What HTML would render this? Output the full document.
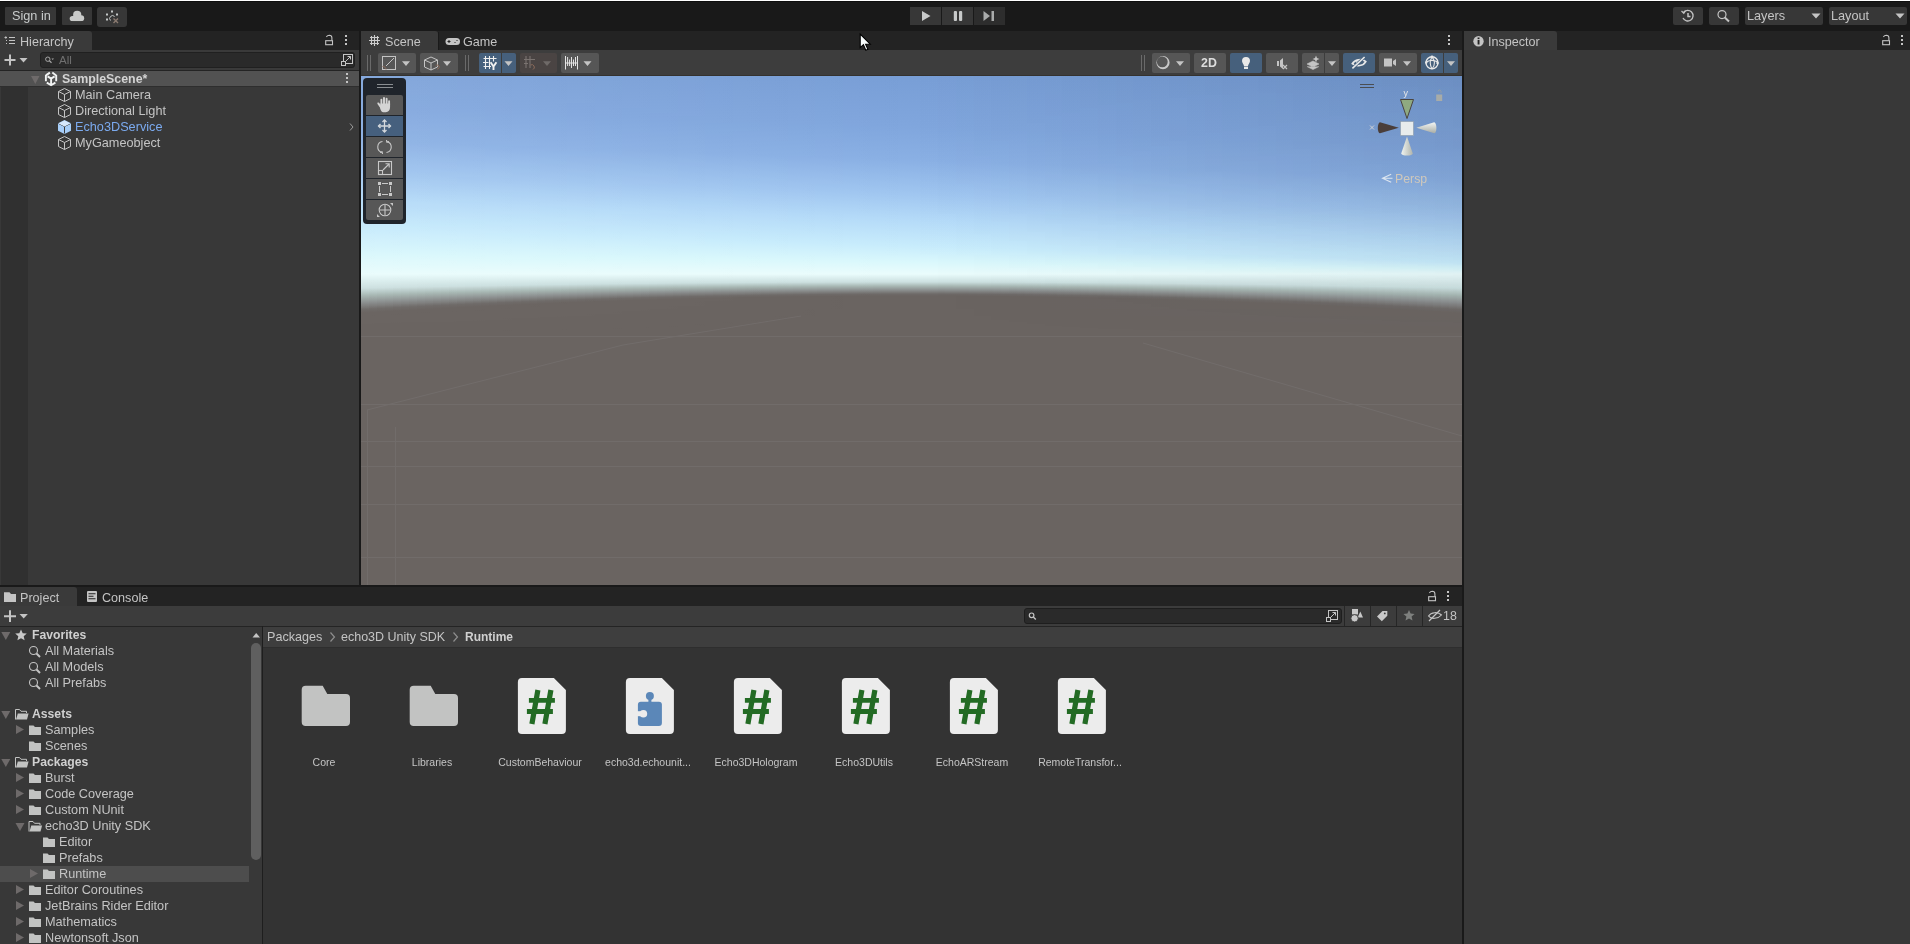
<!DOCTYPE html>
<html><head><meta charset="utf-8">
<style>
*{box-sizing:border-box;margin:0;padding:0}
html,body{width:1910px;height:944px;overflow:hidden;background:#191919;font-family:"Liberation Sans",sans-serif;color:#c4c4c4;font-size:12.5px}
.a{position:absolute}
.t{position:absolute;white-space:nowrap;line-height:16px;height:16px;will-change:transform}
.btn{position:absolute;background:#373737;border-radius:2px}
.sb{position:absolute;background:#565656;border-radius:2px}
.blue{background:#46607c}
svg{position:absolute;overflow:visible}
.ic{fill:none;stroke:#c4c4c4;stroke-width:1}
</style></head><body>
<!-- TOP TOOLBAR -->
<div class="a" style="left:0;top:0;width:1910px;height:1px;background:#ffffff"></div>
<div class="a" style="left:0;top:1px;width:1910px;height:1px;background:#0e0e0e"></div>

<div class="btn" style="left:5px;top:7px;width:51px;height:18px;border-radius:1px"></div>
<div class="t" style="left:12px;top:8px;color:#c9cccc;font-size:12.7px">Sign in</div>
<div class="btn" style="left:62px;top:7px;width:30px;height:18px;border-radius:1px"></div>
<svg style="left:0;top:0" width="1" height="1"><g fill="#c9cac9"><circle cx="72.3" cy="18.5" r="2.6"/><circle cx="77.2" cy="14.9" r="4.1"/><circle cx="81.3" cy="18.2" r="2.85"/><rect x="72.3" y="16" width="9" height="5.05"/></g></svg>
<div class="btn" style="left:97px;top:7px;width:30px;height:20px;border-radius:3px"></div>
<svg style="left:0;top:0" width="1" height="1">
<g fill="#c4c8c8"><rect x="111" y="10.5" width="2" height="2"/><rect x="106" y="13.5" width="2" height="2"/><rect x="116" y="13.5" width="2" height="2"/><rect x="106" y="18.5" width="2" height="2"/></g>
<path d="M110.5 20.5 A2.8 2.8 0 1 1 114.6 16.5" class="ic" style="stroke:#c4c8c8"/>
<path d="M113.5 18.5 L118 23 M118 18.5 L113.5 23" stroke="#8a7a70" stroke-width="1.4"/>
</svg>

<div class="btn" style="left:910px;top:7px;width:31px;height:18px;border-radius:0"></div>
<div class="btn" style="left:942px;top:7px;width:31px;height:18px;border-radius:0"></div>
<div class="btn" style="left:974px;top:7px;width:31px;height:18px;border-radius:0;background:#2d2d2d"></div>
<svg style="left:0;top:0" width="1" height="1">
<path d="M922 11 L930.5 16 L922 21 Z" fill="#c8caca"/>
<rect x="953.8" y="11" width="3.2" height="10" rx="1" fill="#c8caca"/><rect x="959" y="11" width="3.2" height="10" rx="1" fill="#c8caca"/>
<path d="M983.5 11 L990 16 L983.5 21 Z" fill="#a9abab"/><rect x="991.5" y="11" width="2.5" height="10" fill="#a9abab"/>
</svg>

<div class="btn" style="left:1673px;top:7px;width:30px;height:18px"></div>
<div class="btn" style="left:1709px;top:7px;width:30px;height:18px"></div>
<svg style="left:0;top:0" width="1" height="1">
<path d="M1683.5 12.5 A5.3 5.3 0 1 1 1683 18" class="ic" style="stroke-width:1.3"/>
<path d="M1681.5 11 L1683.8 13.2 L1685.5 10.6" class="ic" style="stroke-width:1.2"/>
<path d="M1688 13 L1688 16.5 L1690.5 16.5" class="ic" style="stroke-width:1.5"/>
<circle cx="1722" cy="14.6" r="4" class="ic" style="stroke-width:1.2"/>
<path d="M1724.8 17.6 L1729 21.5" class="ic" style="stroke-width:2"/>
</svg>
<div class="btn" style="left:1745px;top:7px;width:78px;height:18px"></div>
<div class="t" style="left:1747px;top:8px;color:#c4c4c4;font-size:12.7px">Layers</div>
<div class="btn" style="left:1829px;top:7px;width:78px;height:18px"></div>
<div class="t" style="left:1831px;top:8px;color:#c4c4c4;font-size:12.7px">Layout</div>
<svg style="left:0;top:0" width="1" height="1"><path d="M1811.5 13.5 L1820.5 13.5 L1816 18.5Z M1895.5 13.5 L1904.5 13.5 L1900 18.5Z" fill="#c4c4c4"/></svg>

<!-- HIERARCHY -->
<div class="a" style="left:0;top:31px;width:359px;height:554px;background:#383838"></div>
<div class="a" style="left:0;top:31px;width:359px;height:19px;background:#232323"></div>
<div class="a" style="left:0;top:31px;width:92px;height:19px;background:#3a3a3a;border-radius:0 3px 0 0"></div>
<svg style="left:0;top:0" width="1" height="1"><g stroke="#c4c4c4" stroke-width="1" fill="none">
<path d="M9 37.5 H15 M9 40.5 H15 M9 43.5 H15 M4.5 37.5 H7 M5.8 36.3 V38.7 M6 40.5 H7 M6 43.5 H7"/></g></svg>
<div class="t" style="left:20px;top:34px;font-size:12.6px">Hierarchy</div>
<svg style="left:0;top:0" width="1" height="1">
<g transform="translate(-1557 0)"><path d="M1883.4 36.8 Q1884.6 35.2 1886.2 35.2 Q1888.9 35.3 1888.9 37.8 V40.6" class="ic" style="stroke-width:1.1"/><rect x="1882.7" y="40.7" width="6.8" height="4" class="ic" style="stroke-width:1.1"/></g>
<g fill="#c4c4c4"><rect x="345" y="35" width="2" height="2"/><rect x="345" y="39" width="2" height="2"/><rect x="345" y="43" width="2" height="2"/></g>
</svg>
<div class="a" style="left:0;top:50px;width:359px;height:20px;background:#3a3a3a"></div>
<svg style="left:0;top:0" width="1" height="1"><path d="M10 54.5 V65.5 M4.5 60 H15.5" stroke="#c4c4c4" stroke-width="2"/><path d="M19.5 58 L27.5 58 L23.5 62.5Z" fill="#c4c4c4"/></svg>
<div class="a" style="left:40px;top:52px;width:315px;height:16px;background:#2a2a2a;border:1px solid #202020;border-radius:3px"></div>
<svg style="left:0;top:0" width="1" height="1">
<circle cx="47.8" cy="59.2" r="2.2" class="ic" style="stroke:#a8a8a8"/><path d="M49.4 60.8 L51.5 62.8" stroke="#a8a8a8" stroke-width="1.2"/><path d="M51.5 58.5 L54 58.5 L52.7 60Z" fill="#a8a8a8"/>
</svg>
<div class="t" style="left:59px;top:52px;color:#707070;font-size:11.5px">All</div>
<svg style="left:0;top:0" width="1" height="1">
<rect x="343.5" y="54.5" width="9" height="9" class="ic"/><rect x="341.5" y="61.5" width="4" height="4" class="ic" style="fill:#2a2a2a"/><path d="M345 62 L350.5 56.5 M347.5 56.5 H350.5 V59.5" class="ic"/>
</svg>
<div class="a" style="left:1px;top:87px;width:27px;height:498px;background:#303030"></div>
<div class="a" style="left:0;top:70px;width:359px;height:1px;background:#242424"></div>
<div class="a" style="left:0;top:71px;width:359px;height:15px;background:#525252"></div>
<div class="a" style="left:0;top:86px;width:359px;height:1px;background:#2e2e2e"></div>
<svg style="left:0;top:0" width="1" height="1">
<path d="M31 76 L39.5 76 L35.25 84Z" fill="#6e6a6a"/>
<g stroke="#f2f4f4" stroke-width="1.9" fill="none"><path d="M45.9 75 V81.2 M56.2 75 V81.2 M45.9 75.4 L49.9 72.6 M52.3 72.6 L56.2 75.4 M47.6 76.4 L51.1 78.6 L54.6 76.4 M51.1 78.6 V84.6 M46.8 82.6 L51.1 85.2 L55.4 82.6"/></g>
<g fill="#c4c4c4"><rect x="346" y="73" width="2" height="2"/><rect x="346" y="77" width="2" height="2"/><rect x="346" y="81" width="2" height="2"/></g>
</svg>
<div class="t" style="left:62px;top:71px;font-weight:bold;color:#d4d4d4;font-size:12.4px">SampleScene*</div>
<svg style="left:0;top:0" width="1" height="1"><g fill="none" stroke="#c4c4c4" stroke-width="1">
<g transform="translate(0 0)"><path d="M64.5 88.5 L70.5 91.5 L70.5 98.5 L64.5 101.5 L58.5 98.5 L58.5 91.5Z M58.5 91.5 L64.5 94.5 L70.5 91.5 M64.5 94.5 V101.5"/></g>
<g transform="translate(0 16)"><path d="M64.5 88.5 L70.5 91.5 L70.5 98.5 L64.5 101.5 L58.5 98.5 L58.5 91.5Z M58.5 91.5 L64.5 94.5 L70.5 91.5 M64.5 94.5 V101.5"/></g>
<g transform="translate(0 48)"><path d="M64.5 88.5 L70.5 91.5 L70.5 98.5 L64.5 101.5 L58.5 98.5 L58.5 91.5Z M58.5 91.5 L64.5 94.5 L70.5 91.5 M64.5 94.5 V101.5"/></g>
</g>
<g transform="translate(0 32)"><path d="M64.5 88 L71 91.3 L71 98.7 L64.5 102 L58 98.7 L58 91.3Z" fill="#a6cdf8"/><path d="M58.5 91.5 L64.5 94.5 L70.5 91.5 M64.5 94.5 V101.5" stroke="#3a3a3a" stroke-width="1" fill="none"/><path d="M64.5 88.5 L70.5 91.5 L64.5 94.5 L58.5 91.5Z" fill="#d6e8fc"/></g>
<path d="M350 123.5 L353 127 L350 130.5" class="ic" style="stroke:#9a9a9a"/>
</svg>
<div class="t" style="left:75px;top:87px;font-size:12.7px">Main Camera</div>
<div class="t" style="left:75px;top:103px;font-size:12.7px">Directional Light</div>
<div class="t" style="left:75px;top:119px;color:#7baaef;font-size:12.7px">Echo3DService</div>
<div class="t" style="left:75px;top:135px;font-size:12.7px">MyGameobject</div>

<!-- separators -->
<div class="a" style="left:359px;top:31px;width:2px;height:556px;background:#191919"></div>
<div class="a" style="left:1462px;top:31px;width:2px;height:913px;background:#191919"></div>
<div class="a" style="left:0;top:585px;width:1462px;height:2px;background:#191919"></div>


<!-- SCENE -->
<div class="a" style="left:361px;top:31px;width:1101px;height:19px;background:#232323"></div>
<div class="a" style="left:361px;top:31px;width:77px;height:19px;background:#3a3a3a;border-radius:0 3px 0 0"></div>
<div class="a" style="left:438px;top:32px;width:1px;height:18px;background:#1a1a1a"></div>
<svg style="left:0;top:0" width="1" height="1"><path d="M371.5 36 V45 M374.5 35 V46 M377.5 36 V45 M370 37.5 H379 M369 40.5 H380 M370 43.5 H379" stroke="#cccccc" stroke-width="1.1"/>
<path d="M449 38 H456.5 A3.5 3.5 0 0 1 456.5 45 H449 A3.5 3.5 0 0 1 449 38Z" fill="#c4c4c4"/><path d="M447.5 41.5 H450.5 M449 40 V43 M454.5 43 L455.5 42 M456.5 41 L457.5 40" stroke="#232323" stroke-width="1"/>
<g fill="#c4c4c4"><rect x="1448" y="35" width="2" height="2"/><rect x="1448" y="39" width="2" height="2"/><rect x="1448" y="43" width="2" height="2"/></g>
</svg>
<div class="t" style="left:385px;top:34px;font-size:12.6px">Scene</div>
<div class="t" style="left:463px;top:34px;font-size:12.6px">Game</div>
<div class="a" style="left:361px;top:50px;width:1101px;height:25px;background:#3d3d3d"></div>
<div class="a" style="left:361px;top:75px;width:1101px;height:1px;background:#34322f"></div>
<!-- scene toolbar buttons -->
<svg style="left:0;top:0" width="1" height="1"><g stroke="#6a6a6a" stroke-width="1"><path d="M367.5 55 V71 M370.5 55 V71 M465.5 55 V71 M468.5 55 V71 M1141.5 55 V71 M1144.5 55 V71"/></g></svg>
<div class="sb" style="left:378px;top:53px;width:38px;height:20px"></div>
<div class="sb" style="left:420px;top:53px;width:38px;height:20px"></div>
<div class="sb blue" style="left:479px;top:53px;width:22px;height:20px;border-radius:2px 0 0 2px"></div>
<div class="sb blue" style="left:502px;top:53px;width:14px;height:20px;border-radius:0 2px 2px 0"></div>
<div class="sb" style="left:520px;top:53px;width:37px;height:20px;background:#4a4443"></div>
<div class="sb" style="left:561px;top:53px;width:38px;height:20px"></div>
<svg style="left:0;top:0" width="1" height="1">
<g fill="#c4c4c4"><path d="M402 61.3 L410 61.3 L406 66Z M443 61.3 L451 61.3 L447 66Z M504.5 61.3 L512.5 61.3 L508.5 66Z M583.5 61.3 L591.5 61.3 L587.5 66Z"/></g>
<path d="M543 61.3 L551 61.3 L547 66Z" fill="#6f6a68"/>
<rect x="382.5" y="56.5" width="13" height="13" class="ic"/><path d="M386 66 L394 58" class="ic"/><path d="M382.5 66.5 A3 3 0 0 1 386 69.5" stroke="#8a6a5a" fill="none"/>
<path d="M431 57 L437.5 60 L437.5 67 L431 70 L424.5 67 L424.5 60Z M424.5 60 L431 63 L437.5 60 M431 63 V70" class="ic"/><path d="M435.5 66 A2 2 0 1 1 437 69" stroke="#8a6a5a" fill="none"/>
<path d="M485.5 56 V69 M489.5 56 V69 M493.5 56 V61.5 M483.5 58.5 H496.5 M483 62.5 H488.5 M483.5 66.5 H491" stroke="#f0f0f0" stroke-width="1.1"/><path d="M490.6 62.3 L493.5 66.5 L496.4 62.3 M493.5 66.5 V70" stroke="#f0f0f0" stroke-width="1.9" fill="none"/>
<path d="M526 56 V68 M530 56 V68 M524 59.5 H535 M524 63.5 H528" stroke="#7a7370" stroke-width="1.1"/><path d="M530.5 65 A2.5 2.5 0 1 1 533 69.5" stroke="#8a6a5a" fill="none"/>
<path d="M565.5 56 V69.5 M577.5 56 V69.5 M567.6 57 V66 M569.6 59.5 V66 M571.5 57 V68 M573.5 59.5 V66 M575.5 57 V66 M565.5 63 H577.5" stroke="#e4e4e4" stroke-width="1"/>
</svg>
<div class="sb" style="left:1152px;top:53px;width:38px;height:20px"></div>
<div class="sb" style="left:1194px;top:53px;width:32px;height:20px"></div>
<div class="sb blue" style="left:1230px;top:53px;width:32px;height:20px"></div>
<div class="sb" style="left:1266px;top:53px;width:32px;height:20px"></div>
<div class="sb" style="left:1302px;top:53px;width:22px;height:20px;border-radius:2px 0 0 2px"></div>
<div class="sb" style="left:1325px;top:53px;width:14px;height:20px;border-radius:0 2px 2px 0"></div>
<div class="sb blue" style="left:1343px;top:53px;width:32px;height:20px"></div>
<div class="sb" style="left:1379px;top:53px;width:38px;height:20px"></div>
<div class="sb blue" style="left:1421px;top:53px;width:22px;height:20px;border-radius:2px 0 0 2px"></div>
<div class="sb blue" style="left:1444px;top:53px;width:14px;height:20px;border-radius:0 2px 2px 0"></div>
<div class="t" style="left:1201px;top:55px;font-weight:bold;color:#dcdcdc;font-size:12.4px">2D</div>
<svg style="left:0;top:0" width="1" height="1">
<g fill="#c4c4c4"><path d="M1176 61.3 L1184 61.3 L1180 66Z M1328 61.3 L1336 61.3 L1332 66Z M1403 61.3 L1411 61.3 L1407 66Z M1447 61.3 L1455 61.3 L1451 66Z"/></g>
<path d="M1156.4 62.6 A6.6 6.6 0 1 0 1169.6 62.6 A6.6 6.6 0 1 0 1156.4 62.6Z M1156.9 61.8 A5.4 5.4 0 1 0 1167.7 61.8 A5.4 5.4 0 1 0 1156.9 61.8Z" fill="#c8c8c8" fill-rule="evenodd"/>
<path d="M1246 57 A4 4 0 0 1 1250 61 C1250 63 1248.3 64 1248 66 H1244 C1243.7 64 1242 63 1242 61 A4 4 0 0 1 1246 57Z" fill="#e8e8e8"/><rect x="1244" y="66.6" width="4" height="2.4" fill="#e8e8e8"/>
<path d="M1277 61 H1279 V66 H1277Z M1280 60.5 L1283 58 V69 L1280 66.5Z" fill="#c4c4c4"/><path d="M1283 65 L1287 69 M1287 65 L1283 69" stroke="#c4c4c4" stroke-width="1.2"/>
<path d="M1307 64 L1313 61 L1319 64 L1313 67Z M1307 66.5 L1313 69.5 L1319 66.5" fill="#c4c4c4" stroke="#c4c4c4" stroke-width="0.6"/><path d="M1316 55.5 L1317 58 L1319.5 59 L1317 60 L1316 62.5 L1315 60 L1312.5 59 L1315 58Z" fill="#c4c4c4"/>
<path d="M1352.3 63.6 C1354.5 59.8 1362 58.2 1365.8 61.6 C1363.5 65.8 1356.5 67.2 1352.3 63.6Z" class="ic" style="stroke:#e8e8e8;stroke-width:1.7"/><path d="M1357.5 64.5 A2.4 2.4 0 0 1 1361 60.8" class="ic" style="stroke:#e8e8e8;stroke-width:1.3"/><path d="M1352.4 68.4 L1364.6 57" stroke="#46607c" stroke-width="3"/><path d="M1352.4 68.4 L1364.6 57" stroke="#e8e8e8" stroke-width="1.6"/>
<rect x="1384" y="58.5" width="8" height="8" fill="#c4c4c4"/><path d="M1393 61 L1396 59 V66 L1393 64Z" fill="#c4c4c4"/>
<circle cx="1432" cy="62.8" r="6" class="ic" style="stroke:#e8e8e8;stroke-width:1.4"/><path d="M1426.5 62 C1430 60 1434 60 1437.5 62 M1432 57 C1430 60 1430 65 1432 69 M1432 57 C1435 60 1435.5 65 1432 69" class="ic" style="stroke:#e8e8e8;stroke-width:1.1"/><circle cx="1432" cy="56.8" r="1.4" fill="#e8e8e8"/><circle cx="1426.2" cy="62.5" r="1.2" fill="#e8e8e8"/><circle cx="1437.5" cy="63" r="1.2" fill="#e8e8e8"/>
</svg>

<div id="sceneview" class="a" style="left:361px;top:76px;width:1101px;height:509px;background:#6a6461;overflow:hidden">
<div class="a" style="left:0px;top:0;width:8px;height:509px;background:linear-gradient(#769cd4 -34.6px,#80a6dd 31.4px,#8ab0e4 65.4px,#a0c6f0 99.4px,#b4daf8 124.4px,#c8ecfc 153.8px,#daf8fc 179.0px,#eafcfc 198.0px,#cce0e0 212.1px,#a8b8b4 219.2px,#8c9090 226.2px,#6e6a68 233.3px,#6a6461 236.8px)"></div>
<div class="a" style="left:8px;top:0;width:8px;height:509px;background:linear-gradient(#769cd4 -34.3px,#80a6dd 31.7px,#8ab0e4 65.7px,#a0c6f0 99.7px,#b4daf8 124.7px,#c8ecfc 154.0px,#daf8fc 179.1px,#eafcfc 198.0px,#cce0e0 211.9px,#a8b8b4 218.9px,#8c9090 225.9px,#6e6a68 232.8px,#6a6461 236.3px)"></div>
<div class="a" style="left:16px;top:0;width:8px;height:509px;background:linear-gradient(#769cd4 -34.0px,#80a6dd 32.0px,#8ab0e4 66.0px,#a0c6f0 100.0px,#b4daf8 125.0px,#c8ecfc 154.2px,#daf8fc 179.2px,#eafcfc 198.0px,#cce0e0 211.8px,#a8b8b4 218.6px,#8c9090 225.5px,#6e6a68 232.4px,#6a6461 235.8px)"></div>
<div class="a" style="left:24px;top:0;width:8px;height:509px;background:linear-gradient(#769cd4 -33.7px,#80a6dd 32.3px,#8ab0e4 66.3px,#a0c6f0 100.3px,#b4daf8 125.3px,#c8ecfc 154.5px,#daf8fc 179.3px,#eafcfc 198.0px,#cce0e0 211.6px,#a8b8b4 218.4px,#8c9090 225.2px,#6e6a68 232.0px,#6a6461 235.4px)"></div>
<div class="a" style="left:32px;top:0;width:8px;height:509px;background:linear-gradient(#769cd4 -33.5px,#80a6dd 32.5px,#8ab0e4 66.5px,#a0c6f0 100.5px,#b4daf8 125.5px,#c8ecfc 154.7px,#daf8fc 179.4px,#eafcfc 198.0px,#cce0e0 211.4px,#a8b8b4 218.1px,#8c9090 224.8px,#6e6a68 231.5px,#6a6461 234.9px)"></div>
<div class="a" style="left:40px;top:0;width:8px;height:509px;background:linear-gradient(#769cd4 -33.2px,#80a6dd 32.8px,#8ab0e4 66.8px,#a0c6f0 100.8px,#b4daf8 125.8px,#c8ecfc 154.9px,#daf8fc 179.5px,#eafcfc 198.0px,#cce0e0 211.2px,#a8b8b4 217.9px,#8c9090 224.5px,#6e6a68 231.1px,#6a6461 234.4px)"></div>
<div class="a" style="left:48px;top:0;width:8px;height:509px;background:linear-gradient(#769cd4 -32.9px,#80a6dd 33.1px,#8ab0e4 67.1px,#a0c6f0 101.1px,#b4daf8 126.1px,#c8ecfc 155.2px,#daf8fc 179.7px,#eafcfc 198.0px,#cce0e0 211.1px,#a8b8b4 217.6px,#8c9090 224.2px,#6e6a68 230.7px,#6a6461 234.0px)"></div>
<div class="a" style="left:56px;top:0;width:8px;height:509px;background:linear-gradient(#769cd4 -32.7px,#80a6dd 33.3px,#8ab0e4 67.3px,#a0c6f0 101.3px,#b4daf8 126.3px,#c8ecfc 155.4px,#daf8fc 179.8px,#eafcfc 198.0px,#cce0e0 210.9px,#a8b8b4 217.4px,#8c9090 223.8px,#6e6a68 230.3px,#6a6461 233.5px)"></div>
<div class="a" style="left:64px;top:0;width:8px;height:509px;background:linear-gradient(#769cd4 -32.4px,#80a6dd 33.6px,#8ab0e4 67.6px,#a0c6f0 101.6px,#b4daf8 126.6px,#c8ecfc 155.7px,#daf8fc 179.9px,#eafcfc 198.0px,#cce0e0 210.8px,#a8b8b4 217.1px,#8c9090 223.5px,#6e6a68 229.9px,#6a6461 233.1px)"></div>
<div class="a" style="left:72px;top:0;width:8px;height:509px;background:linear-gradient(#769cd4 -32.1px,#80a6dd 33.9px,#8ab0e4 67.9px,#a0c6f0 101.9px,#b4daf8 126.9px,#c8ecfc 155.9px,#daf8fc 180.0px,#eafcfc 198.0px,#cce0e0 210.6px,#a8b8b4 216.9px,#8c9090 223.2px,#6e6a68 229.5px,#6a6461 232.7px)"></div>
<div class="a" style="left:80px;top:0;width:8px;height:509px;background:linear-gradient(#769cd4 -31.8px,#80a6dd 34.2px,#8ab0e4 68.2px,#a0c6f0 102.2px,#b4daf8 127.2px,#c8ecfc 156.1px,#daf8fc 180.1px,#eafcfc 198.0px,#cce0e0 210.5px,#a8b8b4 216.7px,#8c9090 222.9px,#6e6a68 229.1px,#6a6461 232.2px)"></div>
<div class="a" style="left:88px;top:0;width:8px;height:509px;background:linear-gradient(#769cd4 -31.6px,#80a6dd 34.4px,#8ab0e4 68.4px,#a0c6f0 102.4px,#b4daf8 127.4px,#c8ecfc 156.4px,#daf8fc 180.2px,#eafcfc 198.0px,#cce0e0 210.3px,#a8b8b4 216.4px,#8c9090 222.6px,#6e6a68 228.7px,#6a6461 231.8px)"></div>
<div class="a" style="left:96px;top:0;width:8px;height:509px;background:linear-gradient(#769cd4 -31.3px,#80a6dd 34.7px,#8ab0e4 68.7px,#a0c6f0 102.7px,#b4daf8 127.7px,#c8ecfc 156.6px,#daf8fc 180.3px,#eafcfc 198.0px,#cce0e0 210.2px,#a8b8b4 216.2px,#8c9090 222.3px,#6e6a68 228.4px,#6a6461 231.4px)"></div>
<div class="a" style="left:104px;top:0;width:8px;height:509px;background:linear-gradient(#769cd4 -31.0px,#80a6dd 35.0px,#8ab0e4 69.0px,#a0c6f0 103.0px,#b4daf8 128.0px,#c8ecfc 156.9px,#daf8fc 180.4px,#eafcfc 198.0px,#cce0e0 210.0px,#a8b8b4 216.0px,#8c9090 222.0px,#6e6a68 228.0px,#6a6461 231.0px)"></div>
<div class="a" style="left:112px;top:0;width:8px;height:509px;background:linear-gradient(#769cd4 -30.8px,#80a6dd 35.2px,#8ab0e4 69.2px,#a0c6f0 103.2px,#b4daf8 128.2px,#c8ecfc 157.1px,#daf8fc 180.5px,#eafcfc 198.0px,#cce0e0 209.9px,#a8b8b4 215.8px,#8c9090 221.7px,#6e6a68 227.7px,#6a6461 230.6px)"></div>
<div class="a" style="left:120px;top:0;width:8px;height:509px;background:linear-gradient(#769cd4 -30.5px,#80a6dd 35.5px,#8ab0e4 69.5px,#a0c6f0 103.5px,#b4daf8 128.5px,#c8ecfc 157.3px,#daf8fc 180.6px,#eafcfc 198.0px,#cce0e0 209.7px,#a8b8b4 215.6px,#8c9090 221.4px,#6e6a68 227.3px,#6a6461 230.2px)"></div>
<div class="a" style="left:128px;top:0;width:8px;height:509px;background:linear-gradient(#769cd4 -30.2px,#80a6dd 35.8px,#8ab0e4 69.8px,#a0c6f0 103.8px,#b4daf8 128.8px,#c8ecfc 157.6px,#daf8fc 180.7px,#eafcfc 198.0px,#cce0e0 209.6px,#a8b8b4 215.4px,#8c9090 221.2px,#6e6a68 227.0px,#6a6461 229.8px)"></div>
<div class="a" style="left:136px;top:0;width:8px;height:509px;background:linear-gradient(#769cd4 -29.9px,#80a6dd 36.1px,#8ab0e4 70.1px,#a0c6f0 104.1px,#b4daf8 129.1px,#c8ecfc 157.8px,#daf8fc 180.8px,#eafcfc 198.0px,#cce0e0 209.4px,#a8b8b4 215.2px,#8c9090 220.9px,#6e6a68 226.6px,#6a6461 229.5px)"></div>
<div class="a" style="left:144px;top:0;width:8px;height:509px;background:linear-gradient(#769cd4 -29.7px,#80a6dd 36.3px,#8ab0e4 70.3px,#a0c6f0 104.3px,#b4daf8 129.3px,#c8ecfc 158.0px,#daf8fc 180.9px,#eafcfc 198.0px,#cce0e0 209.3px,#a8b8b4 215.0px,#8c9090 220.6px,#6e6a68 226.3px,#6a6461 229.1px)"></div>
<div class="a" style="left:152px;top:0;width:8px;height:509px;background:linear-gradient(#769cd4 -29.4px,#80a6dd 36.6px,#8ab0e4 70.6px,#a0c6f0 104.6px,#b4daf8 129.6px,#c8ecfc 158.3px,#daf8fc 181.0px,#eafcfc 198.0px,#cce0e0 209.2px,#a8b8b4 214.8px,#8c9090 220.4px,#6e6a68 226.0px,#6a6461 228.7px)"></div>
<div class="a" style="left:160px;top:0;width:8px;height:509px;background:linear-gradient(#769cd4 -29.1px,#80a6dd 36.9px,#8ab0e4 70.9px,#a0c6f0 104.9px,#b4daf8 129.9px,#c8ecfc 158.5px,#daf8fc 181.1px,#eafcfc 198.0px,#cce0e0 209.1px,#a8b8b4 214.6px,#8c9090 220.1px,#6e6a68 225.6px,#6a6461 228.4px)"></div>
<div class="a" style="left:168px;top:0;width:8px;height:509px;background:linear-gradient(#769cd4 -28.9px,#80a6dd 37.1px,#8ab0e4 71.1px,#a0c6f0 105.1px,#b4daf8 130.1px,#c8ecfc 158.8px,#daf8fc 181.2px,#eafcfc 198.0px,#cce0e0 208.9px,#a8b8b4 214.4px,#8c9090 219.9px,#6e6a68 225.3px,#6a6461 228.1px)"></div>
<div class="a" style="left:176px;top:0;width:8px;height:509px;background:linear-gradient(#769cd4 -28.6px,#80a6dd 37.4px,#8ab0e4 71.4px,#a0c6f0 105.4px,#b4daf8 130.4px,#c8ecfc 159.0px,#daf8fc 181.3px,#eafcfc 198.0px,#cce0e0 208.8px,#a8b8b4 214.2px,#8c9090 219.6px,#6e6a68 225.0px,#6a6461 227.7px)"></div>
<div class="a" style="left:184px;top:0;width:8px;height:509px;background:linear-gradient(#769cd4 -28.3px,#80a6dd 37.7px,#8ab0e4 71.7px,#a0c6f0 105.7px,#b4daf8 130.7px,#c8ecfc 159.2px,#daf8fc 181.4px,#eafcfc 198.0px,#cce0e0 208.7px,#a8b8b4 214.0px,#8c9090 219.4px,#6e6a68 224.7px,#6a6461 227.4px)"></div>
<div class="a" style="left:192px;top:0;width:8px;height:509px;background:linear-gradient(#769cd4 -28.0px,#80a6dd 38.0px,#8ab0e4 72.0px,#a0c6f0 106.0px,#b4daf8 131.0px,#c8ecfc 159.5px,#daf8fc 181.5px,#eafcfc 198.0px,#cce0e0 208.6px,#a8b8b4 213.9px,#8c9090 219.1px,#6e6a68 224.4px,#6a6461 227.1px)"></div>
<div class="a" style="left:200px;top:0;width:8px;height:509px;background:linear-gradient(#769cd4 -27.8px,#80a6dd 38.2px,#8ab0e4 72.2px,#a0c6f0 106.2px,#b4daf8 131.2px,#c8ecfc 159.7px,#daf8fc 181.6px,#eafcfc 198.0px,#cce0e0 208.5px,#a8b8b4 213.7px,#8c9090 218.9px,#6e6a68 224.1px,#6a6461 226.7px)"></div>
<div class="a" style="left:208px;top:0;width:8px;height:509px;background:linear-gradient(#769cd4 -27.5px,#80a6dd 38.5px,#8ab0e4 72.5px,#a0c6f0 106.5px,#b4daf8 131.5px,#c8ecfc 159.9px,#daf8fc 181.7px,#eafcfc 198.0px,#cce0e0 208.3px,#a8b8b4 213.5px,#8c9090 218.7px,#6e6a68 223.9px,#6a6461 226.4px)"></div>
<div class="a" style="left:216px;top:0;width:8px;height:509px;background:linear-gradient(#769cd4 -27.2px,#80a6dd 38.8px,#8ab0e4 72.8px,#a0c6f0 106.8px,#b4daf8 131.8px,#c8ecfc 160.2px,#daf8fc 181.8px,#eafcfc 198.0px,#cce0e0 208.2px,#a8b8b4 213.3px,#8c9090 218.5px,#6e6a68 223.6px,#6a6461 226.1px)"></div>
<div class="a" style="left:224px;top:0;width:8px;height:509px;background:linear-gradient(#769cd4 -26.9px,#80a6dd 39.1px,#8ab0e4 73.1px,#a0c6f0 107.1px,#b4daf8 132.1px,#c8ecfc 160.4px,#daf8fc 181.9px,#eafcfc 198.0px,#cce0e0 208.1px,#a8b8b4 213.2px,#8c9090 218.3px,#6e6a68 223.3px,#6a6461 225.8px)"></div>
<div class="a" style="left:232px;top:0;width:8px;height:509px;background:linear-gradient(#769cd4 -26.7px,#80a6dd 39.3px,#8ab0e4 73.3px,#a0c6f0 107.3px,#b4daf8 132.3px,#c8ecfc 160.7px,#daf8fc 182.0px,#eafcfc 198.0px,#cce0e0 208.0px,#a8b8b4 213.0px,#8c9090 218.0px,#6e6a68 223.1px,#6a6461 225.6px)"></div>
<div class="a" style="left:240px;top:0;width:8px;height:509px;background:linear-gradient(#769cd4 -26.4px,#80a6dd 39.6px,#8ab0e4 73.6px,#a0c6f0 107.6px,#b4daf8 132.6px,#c8ecfc 160.9px,#daf8fc 182.1px,#eafcfc 198.0px,#cce0e0 207.9px,#a8b8b4 212.9px,#8c9090 217.8px,#6e6a68 222.8px,#6a6461 225.3px)"></div>
<div class="a" style="left:248px;top:0;width:8px;height:509px;background:linear-gradient(#769cd4 -26.1px,#80a6dd 39.9px,#8ab0e4 73.9px,#a0c6f0 107.9px,#b4daf8 132.9px,#c8ecfc 161.1px,#daf8fc 182.2px,#eafcfc 198.0px,#cce0e0 207.8px,#a8b8b4 212.7px,#8c9090 217.6px,#6e6a68 222.6px,#6a6461 225.0px)"></div>
<div class="a" style="left:256px;top:0;width:8px;height:509px;background:linear-gradient(#769cd4 -25.9px,#80a6dd 40.1px,#8ab0e4 74.1px,#a0c6f0 108.1px,#b4daf8 133.1px,#c8ecfc 161.4px,#daf8fc 182.3px,#eafcfc 198.0px,#cce0e0 207.7px,#a8b8b4 212.6px,#8c9090 217.4px,#6e6a68 222.3px,#6a6461 224.7px)"></div>
<div class="a" style="left:264px;top:0;width:8px;height:509px;background:linear-gradient(#769cd4 -25.6px,#80a6dd 40.4px,#8ab0e4 74.4px,#a0c6f0 108.4px,#b4daf8 133.4px,#c8ecfc 161.6px,#daf8fc 182.4px,#eafcfc 198.0px,#cce0e0 207.6px,#a8b8b4 212.4px,#8c9090 217.3px,#6e6a68 222.1px,#6a6461 224.5px)"></div>
<div class="a" style="left:272px;top:0;width:8px;height:509px;background:linear-gradient(#769cd4 -25.3px,#80a6dd 40.7px,#8ab0e4 74.7px,#a0c6f0 108.7px,#b4daf8 133.7px,#c8ecfc 161.8px,#daf8fc 182.5px,#eafcfc 198.0px,#cce0e0 207.5px,#a8b8b4 212.3px,#8c9090 217.1px,#6e6a68 221.8px,#6a6461 224.2px)"></div>
<div class="a" style="left:280px;top:0;width:8px;height:509px;background:linear-gradient(#769cd4 -25.0px,#80a6dd 41.0px,#8ab0e4 75.0px,#a0c6f0 109.0px,#b4daf8 134.0px,#c8ecfc 162.1px,#daf8fc 182.6px,#eafcfc 198.0px,#cce0e0 207.5px,#a8b8b4 212.2px,#8c9090 216.9px,#6e6a68 221.6px,#6a6461 224.0px)"></div>
<div class="a" style="left:288px;top:0;width:8px;height:509px;background:linear-gradient(#769cd4 -24.8px,#80a6dd 41.2px,#8ab0e4 75.2px,#a0c6f0 109.2px,#b4daf8 134.2px,#c8ecfc 162.3px,#daf8fc 182.7px,#eafcfc 198.0px,#cce0e0 207.4px,#a8b8b4 212.0px,#8c9090 216.7px,#6e6a68 221.4px,#6a6461 223.8px)"></div>
<div class="a" style="left:296px;top:0;width:8px;height:509px;background:linear-gradient(#769cd4 -24.5px,#80a6dd 41.5px,#8ab0e4 75.5px,#a0c6f0 109.5px,#b4daf8 134.5px,#c8ecfc 162.6px,#daf8fc 182.8px,#eafcfc 198.0px,#cce0e0 207.3px,#a8b8b4 211.9px,#8c9090 216.6px,#6e6a68 221.2px,#6a6461 223.5px)"></div>
<div class="a" style="left:304px;top:0;width:8px;height:509px;background:linear-gradient(#769cd4 -24.2px,#80a6dd 41.8px,#8ab0e4 75.8px,#a0c6f0 109.8px,#b4daf8 134.8px,#c8ecfc 162.8px,#daf8fc 182.9px,#eafcfc 198.0px,#cce0e0 207.2px,#a8b8b4 211.8px,#8c9090 216.4px,#6e6a68 221.0px,#6a6461 223.3px)"></div>
<div class="a" style="left:312px;top:0;width:8px;height:509px;background:linear-gradient(#769cd4 -24.0px,#80a6dd 42.0px,#8ab0e4 76.0px,#a0c6f0 110.0px,#b4daf8 135.0px,#c8ecfc 163.0px,#daf8fc 183.0px,#eafcfc 198.0px,#cce0e0 207.1px,#a8b8b4 211.7px,#8c9090 216.2px,#6e6a68 220.8px,#6a6461 223.1px)"></div>
<div class="a" style="left:320px;top:0;width:8px;height:509px;background:linear-gradient(#769cd4 -23.7px,#80a6dd 42.3px,#8ab0e4 76.3px,#a0c6f0 110.3px,#b4daf8 135.3px,#c8ecfc 163.3px,#daf8fc 183.1px,#eafcfc 198.0px,#cce0e0 207.0px,#a8b8b4 211.6px,#8c9090 216.1px,#6e6a68 220.6px,#6a6461 222.9px)"></div>
<div class="a" style="left:328px;top:0;width:8px;height:509px;background:linear-gradient(#769cd4 -23.4px,#80a6dd 42.6px,#8ab0e4 76.6px,#a0c6f0 110.6px,#b4daf8 135.6px,#c8ecfc 163.5px,#daf8fc 183.2px,#eafcfc 198.0px,#cce0e0 207.0px,#a8b8b4 211.5px,#8c9090 215.9px,#6e6a68 220.4px,#6a6461 222.7px)"></div>
<div class="a" style="left:336px;top:0;width:8px;height:509px;background:linear-gradient(#769cd4 -23.1px,#80a6dd 42.9px,#8ab0e4 76.9px,#a0c6f0 110.9px,#b4daf8 135.9px,#c8ecfc 163.8px,#daf8fc 183.3px,#eafcfc 198.0px,#cce0e0 206.9px,#a8b8b4 211.4px,#8c9090 215.8px,#6e6a68 220.3px,#6a6461 222.5px)"></div>
<div class="a" style="left:344px;top:0;width:8px;height:509px;background:linear-gradient(#769cd4 -22.9px,#80a6dd 43.1px,#8ab0e4 77.1px,#a0c6f0 111.1px,#b4daf8 136.1px,#c8ecfc 164.0px,#daf8fc 183.4px,#eafcfc 198.0px,#cce0e0 206.8px,#a8b8b4 211.3px,#8c9090 215.7px,#6e6a68 220.1px,#6a6461 222.3px)"></div>
<div class="a" style="left:352px;top:0;width:8px;height:509px;background:linear-gradient(#769cd4 -22.6px,#80a6dd 43.4px,#8ab0e4 77.4px,#a0c6f0 111.4px,#b4daf8 136.4px,#c8ecfc 164.2px,#daf8fc 183.5px,#eafcfc 198.0px,#cce0e0 206.8px,#a8b8b4 211.2px,#8c9090 215.5px,#6e6a68 219.9px,#6a6461 222.1px)"></div>
<div class="a" style="left:360px;top:0;width:8px;height:509px;background:linear-gradient(#769cd4 -22.3px,#80a6dd 43.7px,#8ab0e4 77.7px,#a0c6f0 111.7px,#b4daf8 136.7px,#c8ecfc 164.5px,#daf8fc 183.6px,#eafcfc 198.0px,#cce0e0 206.7px,#a8b8b4 211.1px,#8c9090 215.4px,#6e6a68 219.8px,#6a6461 221.9px)"></div>
<div class="a" style="left:368px;top:0;width:8px;height:509px;background:linear-gradient(#769cd4 -22.1px,#80a6dd 43.9px,#8ab0e4 77.9px,#a0c6f0 111.9px,#b4daf8 136.9px,#c8ecfc 164.7px,#daf8fc 183.7px,#eafcfc 198.0px,#cce0e0 206.6px,#a8b8b4 211.0px,#8c9090 215.3px,#6e6a68 219.6px,#6a6461 221.8px)"></div>
<div class="a" style="left:376px;top:0;width:8px;height:509px;background:linear-gradient(#769cd4 -21.8px,#80a6dd 44.2px,#8ab0e4 78.2px,#a0c6f0 112.2px,#b4daf8 137.2px,#c8ecfc 164.9px,#daf8fc 183.8px,#eafcfc 198.0px,#cce0e0 206.6px,#a8b8b4 210.9px,#8c9090 215.2px,#6e6a68 219.5px,#6a6461 221.6px)"></div>
<div class="a" style="left:384px;top:0;width:8px;height:509px;background:linear-gradient(#769cd4 -21.5px,#80a6dd 44.5px,#8ab0e4 78.5px,#a0c6f0 112.5px,#b4daf8 137.5px,#c8ecfc 165.2px,#daf8fc 183.9px,#eafcfc 198.0px,#cce0e0 206.5px,#a8b8b4 210.8px,#8c9090 215.1px,#6e6a68 219.3px,#6a6461 221.5px)"></div>
<div class="a" style="left:392px;top:0;width:8px;height:509px;background:linear-gradient(#769cd4 -21.2px,#80a6dd 44.8px,#8ab0e4 78.8px,#a0c6f0 112.8px,#b4daf8 137.8px,#c8ecfc 165.4px,#daf8fc 184.0px,#eafcfc 198.0px,#cce0e0 206.5px,#a8b8b4 210.7px,#8c9090 215.0px,#6e6a68 219.2px,#6a6461 221.3px)"></div>
<div class="a" style="left:400px;top:0;width:8px;height:509px;background:linear-gradient(#769cd4 -21.0px,#80a6dd 45.0px,#8ab0e4 79.0px,#a0c6f0 113.0px,#b4daf8 138.0px,#c8ecfc 165.7px,#daf8fc 184.1px,#eafcfc 198.0px,#cce0e0 206.4px,#a8b8b4 210.7px,#8c9090 214.9px,#6e6a68 219.1px,#6a6461 221.2px)"></div>
<div class="a" style="left:408px;top:0;width:8px;height:509px;background:linear-gradient(#769cd4 -20.7px,#80a6dd 45.3px,#8ab0e4 79.3px,#a0c6f0 113.3px,#b4daf8 138.3px,#c8ecfc 165.9px,#daf8fc 184.2px,#eafcfc 198.0px,#cce0e0 206.4px,#a8b8b4 210.6px,#8c9090 214.8px,#6e6a68 219.0px,#6a6461 221.1px)"></div>
<div class="a" style="left:416px;top:0;width:8px;height:509px;background:linear-gradient(#769cd4 -20.4px,#80a6dd 45.6px,#8ab0e4 79.6px,#a0c6f0 113.6px,#b4daf8 138.6px,#c8ecfc 166.1px,#daf8fc 184.3px,#eafcfc 198.0px,#cce0e0 206.3px,#a8b8b4 210.5px,#8c9090 214.7px,#6e6a68 218.9px,#6a6461 221.0px)"></div>
<div class="a" style="left:424px;top:0;width:8px;height:509px;background:linear-gradient(#769cd4 -20.1px,#80a6dd 45.9px,#8ab0e4 79.9px,#a0c6f0 113.9px,#b4daf8 138.9px,#c8ecfc 166.4px,#daf8fc 184.4px,#eafcfc 198.0px,#cce0e0 206.3px,#a8b8b4 210.5px,#8c9090 214.6px,#6e6a68 218.8px,#6a6461 220.8px)"></div>
<div class="a" style="left:432px;top:0;width:8px;height:509px;background:linear-gradient(#769cd4 -19.9px,#80a6dd 46.1px,#8ab0e4 80.1px,#a0c6f0 114.1px,#b4daf8 139.1px,#c8ecfc 166.6px,#daf8fc 184.5px,#eafcfc 198.0px,#cce0e0 206.3px,#a8b8b4 210.4px,#8c9090 214.5px,#6e6a68 218.7px,#6a6461 220.7px)"></div>
<div class="a" style="left:440px;top:0;width:8px;height:509px;background:linear-gradient(#769cd4 -19.6px,#80a6dd 46.4px,#8ab0e4 80.4px,#a0c6f0 114.4px,#b4daf8 139.4px,#c8ecfc 166.8px,#daf8fc 184.6px,#eafcfc 198.0px,#cce0e0 206.2px,#a8b8b4 210.3px,#8c9090 214.5px,#6e6a68 218.6px,#6a6461 220.6px)"></div>
<div class="a" style="left:448px;top:0;width:8px;height:509px;background:linear-gradient(#769cd4 -19.3px,#80a6dd 46.7px,#8ab0e4 80.7px,#a0c6f0 114.7px,#b4daf8 139.7px,#c8ecfc 167.1px,#daf8fc 184.8px,#eafcfc 198.0px,#cce0e0 206.2px,#a8b8b4 210.3px,#8c9090 214.4px,#6e6a68 218.5px,#6a6461 220.5px)"></div>
<div class="a" style="left:456px;top:0;width:8px;height:509px;background:linear-gradient(#769cd4 -19.1px,#80a6dd 46.9px,#8ab0e4 80.9px,#a0c6f0 114.9px,#b4daf8 139.9px,#c8ecfc 167.3px,#daf8fc 184.9px,#eafcfc 198.0px,#cce0e0 206.2px,#a8b8b4 210.2px,#8c9090 214.3px,#6e6a68 218.4px,#6a6461 220.5px)"></div>
<div class="a" style="left:464px;top:0;width:8px;height:509px;background:linear-gradient(#769cd4 -18.8px,#80a6dd 47.2px,#8ab0e4 81.2px,#a0c6f0 115.2px,#b4daf8 140.2px,#c8ecfc 167.6px,#daf8fc 185.0px,#eafcfc 198.0px,#cce0e0 206.1px,#a8b8b4 210.2px,#8c9090 214.3px,#6e6a68 218.3px,#6a6461 220.4px)"></div>
<div class="a" style="left:472px;top:0;width:8px;height:509px;background:linear-gradient(#769cd4 -18.5px,#80a6dd 47.5px,#8ab0e4 81.5px,#a0c6f0 115.5px,#b4daf8 140.5px,#c8ecfc 167.8px,#daf8fc 185.1px,#eafcfc 198.0px,#cce0e0 206.1px,#a8b8b4 210.2px,#8c9090 214.2px,#6e6a68 218.3px,#6a6461 220.3px)"></div>
<div class="a" style="left:480px;top:0;width:8px;height:509px;background:linear-gradient(#769cd4 -18.2px,#80a6dd 47.8px,#8ab0e4 81.8px,#a0c6f0 115.8px,#b4daf8 140.8px,#c8ecfc 168.0px,#daf8fc 185.2px,#eafcfc 198.0px,#cce0e0 206.1px,#a8b8b4 210.1px,#8c9090 214.2px,#6e6a68 218.2px,#6a6461 220.2px)"></div>
<div class="a" style="left:488px;top:0;width:8px;height:509px;background:linear-gradient(#769cd4 -18.0px,#80a6dd 48.0px,#8ab0e4 82.0px,#a0c6f0 116.0px,#b4daf8 141.0px,#c8ecfc 168.3px,#daf8fc 185.3px,#eafcfc 198.0px,#cce0e0 206.1px,#a8b8b4 210.1px,#8c9090 214.1px,#6e6a68 218.2px,#6a6461 220.2px)"></div>
<div class="a" style="left:496px;top:0;width:8px;height:509px;background:linear-gradient(#769cd4 -17.7px,#80a6dd 48.3px,#8ab0e4 82.3px,#a0c6f0 116.3px,#b4daf8 141.3px,#c8ecfc 168.5px,#daf8fc 185.4px,#eafcfc 198.0px,#cce0e0 206.1px,#a8b8b4 210.1px,#8c9090 214.1px,#6e6a68 218.1px,#6a6461 220.1px)"></div>
<div class="a" style="left:504px;top:0;width:8px;height:509px;background:linear-gradient(#769cd4 -17.4px,#80a6dd 48.6px,#8ab0e4 82.6px,#a0c6f0 116.6px,#b4daf8 141.6px,#c8ecfc 168.8px,#daf8fc 185.5px,#eafcfc 198.0px,#cce0e0 206.0px,#a8b8b4 210.1px,#8c9090 214.1px,#6e6a68 218.1px,#6a6461 220.1px)"></div>
<div class="a" style="left:512px;top:0;width:8px;height:509px;background:linear-gradient(#769cd4 -17.2px,#80a6dd 48.8px,#8ab0e4 82.8px,#a0c6f0 116.8px,#b4daf8 141.8px,#c8ecfc 169.0px,#daf8fc 185.6px,#eafcfc 198.0px,#cce0e0 206.0px,#a8b8b4 210.0px,#8c9090 214.0px,#6e6a68 218.1px,#6a6461 220.1px)"></div>
<div class="a" style="left:520px;top:0;width:8px;height:509px;background:linear-gradient(#769cd4 -16.9px,#80a6dd 49.1px,#8ab0e4 83.1px,#a0c6f0 117.1px,#b4daf8 142.1px,#c8ecfc 169.2px,#daf8fc 185.7px,#eafcfc 198.0px,#cce0e0 206.0px,#a8b8b4 210.0px,#8c9090 214.0px,#6e6a68 218.0px,#6a6461 220.0px)"></div>
<div class="a" style="left:528px;top:0;width:8px;height:509px;background:linear-gradient(#769cd4 -16.6px,#80a6dd 49.4px,#8ab0e4 83.4px,#a0c6f0 117.4px,#b4daf8 142.4px,#c8ecfc 169.5px,#daf8fc 185.8px,#eafcfc 198.0px,#cce0e0 206.0px,#a8b8b4 210.0px,#8c9090 214.0px,#6e6a68 218.0px,#6a6461 220.0px)"></div>
<div class="a" style="left:536px;top:0;width:8px;height:509px;background:linear-gradient(#769cd4 -16.3px,#80a6dd 49.7px,#8ab0e4 83.7px,#a0c6f0 117.7px,#b4daf8 142.7px,#c8ecfc 169.7px,#daf8fc 185.9px,#eafcfc 198.0px,#cce0e0 206.0px,#a8b8b4 210.0px,#8c9090 214.0px,#6e6a68 218.0px,#6a6461 220.0px)"></div>
<div class="a" style="left:544px;top:0;width:8px;height:509px;background:linear-gradient(#769cd4 -16.1px,#80a6dd 49.9px,#8ab0e4 83.9px,#a0c6f0 117.9px,#b4daf8 142.9px,#c8ecfc 169.9px,#daf8fc 186.0px,#eafcfc 198.0px,#cce0e0 206.0px,#a8b8b4 210.0px,#8c9090 214.0px,#6e6a68 218.0px,#6a6461 220.0px)"></div>
<div class="a" style="left:552px;top:0;width:8px;height:509px;background:linear-gradient(#769cd4 -15.8px,#80a6dd 50.2px,#8ab0e4 84.2px,#a0c6f0 118.2px,#b4daf8 143.2px,#c8ecfc 170.2px,#daf8fc 186.1px,#eafcfc 198.0px,#cce0e0 206.0px,#a8b8b4 210.0px,#8c9090 214.0px,#6e6a68 218.0px,#6a6461 220.0px)"></div>
<div class="a" style="left:560px;top:0;width:8px;height:509px;background:linear-gradient(#769cd4 -15.5px,#80a6dd 50.5px,#8ab0e4 84.5px,#a0c6f0 118.5px,#b4daf8 143.5px,#c8ecfc 170.4px,#daf8fc 186.2px,#eafcfc 198.0px,#cce0e0 206.0px,#a8b8b4 210.0px,#8c9090 214.0px,#6e6a68 218.0px,#6a6461 220.0px)"></div>
<div class="a" style="left:568px;top:0;width:8px;height:509px;background:linear-gradient(#769cd4 -15.3px,#80a6dd 50.7px,#8ab0e4 84.7px,#a0c6f0 118.7px,#b4daf8 143.7px,#c8ecfc 170.7px,#daf8fc 186.3px,#eafcfc 198.0px,#cce0e0 206.0px,#a8b8b4 210.0px,#8c9090 214.0px,#6e6a68 218.0px,#6a6461 220.0px)"></div>
<div class="a" style="left:576px;top:0;width:8px;height:509px;background:linear-gradient(#769cd4 -15.0px,#80a6dd 51.0px,#8ab0e4 85.0px,#a0c6f0 119.0px,#b4daf8 144.0px,#c8ecfc 170.9px,#daf8fc 186.4px,#eafcfc 198.0px,#cce0e0 206.0px,#a8b8b4 210.0px,#8c9090 214.0px,#6e6a68 218.0px,#6a6461 220.1px)"></div>
<div class="a" style="left:584px;top:0;width:8px;height:509px;background:linear-gradient(#769cd4 -14.7px,#80a6dd 51.3px,#8ab0e4 85.3px,#a0c6f0 119.3px,#b4daf8 144.3px,#c8ecfc 171.1px,#daf8fc 186.5px,#eafcfc 198.0px,#cce0e0 206.0px,#a8b8b4 210.0px,#8c9090 214.1px,#6e6a68 218.1px,#6a6461 220.1px)"></div>
<div class="a" style="left:592px;top:0;width:8px;height:509px;background:linear-gradient(#769cd4 -14.4px,#80a6dd 51.6px,#8ab0e4 85.6px,#a0c6f0 119.6px,#b4daf8 144.6px,#c8ecfc 171.4px,#daf8fc 186.6px,#eafcfc 198.0px,#cce0e0 206.0px,#a8b8b4 210.1px,#8c9090 214.1px,#6e6a68 218.1px,#6a6461 220.1px)"></div>
<div class="a" style="left:600px;top:0;width:8px;height:509px;background:linear-gradient(#769cd4 -14.2px,#80a6dd 51.8px,#8ab0e4 85.8px,#a0c6f0 119.8px,#b4daf8 144.8px,#c8ecfc 171.6px,#daf8fc 186.7px,#eafcfc 198.0px,#cce0e0 206.1px,#a8b8b4 210.1px,#8c9090 214.1px,#6e6a68 218.1px,#6a6461 220.2px)"></div>
<div class="a" style="left:608px;top:0;width:8px;height:509px;background:linear-gradient(#769cd4 -13.9px,#80a6dd 52.1px,#8ab0e4 86.1px,#a0c6f0 120.1px,#b4daf8 145.1px,#c8ecfc 171.8px,#daf8fc 186.8px,#eafcfc 198.0px,#cce0e0 206.1px,#a8b8b4 210.1px,#8c9090 214.2px,#6e6a68 218.2px,#6a6461 220.2px)"></div>
<div class="a" style="left:616px;top:0;width:8px;height:509px;background:linear-gradient(#769cd4 -13.6px,#80a6dd 52.4px,#8ab0e4 86.4px,#a0c6f0 120.4px,#b4daf8 145.4px,#c8ecfc 172.1px,#daf8fc 186.9px,#eafcfc 198.0px,#cce0e0 206.1px,#a8b8b4 210.2px,#8c9090 214.2px,#6e6a68 218.3px,#6a6461 220.3px)"></div>
<div class="a" style="left:624px;top:0;width:8px;height:509px;background:linear-gradient(#769cd4 -13.3px,#80a6dd 52.7px,#8ab0e4 86.7px,#a0c6f0 120.7px,#b4daf8 145.7px,#c8ecfc 172.3px,#daf8fc 187.0px,#eafcfc 198.0px,#cce0e0 206.1px,#a8b8b4 210.2px,#8c9090 214.2px,#6e6a68 218.3px,#6a6461 220.3px)"></div>
<div class="a" style="left:632px;top:0;width:8px;height:509px;background:linear-gradient(#769cd4 -13.1px,#80a6dd 52.9px,#8ab0e4 86.9px,#a0c6f0 120.9px,#b4daf8 145.9px,#c8ecfc 172.6px,#daf8fc 187.1px,#eafcfc 198.0px,#cce0e0 206.2px,#a8b8b4 210.2px,#8c9090 214.3px,#6e6a68 218.4px,#6a6461 220.4px)"></div>
<div class="a" style="left:640px;top:0;width:8px;height:509px;background:linear-gradient(#769cd4 -12.8px,#80a6dd 53.2px,#8ab0e4 87.2px,#a0c6f0 121.2px,#b4daf8 146.2px,#c8ecfc 172.8px,#daf8fc 187.2px,#eafcfc 198.0px,#cce0e0 206.2px,#a8b8b4 210.3px,#8c9090 214.4px,#6e6a68 218.5px,#6a6461 220.5px)"></div>
<div class="a" style="left:648px;top:0;width:8px;height:509px;background:linear-gradient(#769cd4 -12.5px,#80a6dd 53.5px,#8ab0e4 87.5px,#a0c6f0 121.5px,#b4daf8 146.5px,#c8ecfc 173.0px,#daf8fc 187.3px,#eafcfc 198.0px,#cce0e0 206.2px,#a8b8b4 210.3px,#8c9090 214.4px,#6e6a68 218.5px,#6a6461 220.6px)"></div>
<div class="a" style="left:656px;top:0;width:8px;height:509px;background:linear-gradient(#769cd4 -12.3px,#80a6dd 53.7px,#8ab0e4 87.7px,#a0c6f0 121.7px,#b4daf8 146.7px,#c8ecfc 173.3px,#daf8fc 187.4px,#eafcfc 198.0px,#cce0e0 206.2px,#a8b8b4 210.4px,#8c9090 214.5px,#6e6a68 218.6px,#6a6461 220.7px)"></div>
<div class="a" style="left:664px;top:0;width:8px;height:509px;background:linear-gradient(#769cd4 -12.0px,#80a6dd 54.0px,#8ab0e4 88.0px,#a0c6f0 122.0px,#b4daf8 147.0px,#c8ecfc 173.5px,#daf8fc 187.5px,#eafcfc 198.0px,#cce0e0 206.3px,#a8b8b4 210.4px,#8c9090 214.6px,#6e6a68 218.7px,#6a6461 220.8px)"></div>
<div class="a" style="left:672px;top:0;width:8px;height:509px;background:linear-gradient(#769cd4 -11.7px,#80a6dd 54.3px,#8ab0e4 88.3px,#a0c6f0 122.3px,#b4daf8 147.3px,#c8ecfc 173.7px,#daf8fc 187.6px,#eafcfc 198.0px,#cce0e0 206.3px,#a8b8b4 210.5px,#8c9090 214.7px,#6e6a68 218.8px,#6a6461 220.9px)"></div>
<div class="a" style="left:680px;top:0;width:8px;height:509px;background:linear-gradient(#769cd4 -11.4px,#80a6dd 54.6px,#8ab0e4 88.6px,#a0c6f0 122.6px,#b4daf8 147.6px,#c8ecfc 174.0px,#daf8fc 187.7px,#eafcfc 198.0px,#cce0e0 206.4px,#a8b8b4 210.6px,#8c9090 214.7px,#6e6a68 218.9px,#6a6461 221.0px)"></div>
<div class="a" style="left:688px;top:0;width:8px;height:509px;background:linear-gradient(#769cd4 -11.2px,#80a6dd 54.8px,#8ab0e4 88.8px,#a0c6f0 122.8px,#b4daf8 147.8px,#c8ecfc 174.2px,#daf8fc 187.8px,#eafcfc 198.0px,#cce0e0 206.4px,#a8b8b4 210.6px,#8c9090 214.8px,#6e6a68 219.0px,#6a6461 221.1px)"></div>
<div class="a" style="left:696px;top:0;width:8px;height:509px;background:linear-gradient(#769cd4 -10.9px,#80a6dd 55.1px,#8ab0e4 89.1px,#a0c6f0 123.1px,#b4daf8 148.1px,#c8ecfc 174.5px,#daf8fc 187.9px,#eafcfc 198.0px,#cce0e0 206.5px,#a8b8b4 210.7px,#8c9090 214.9px,#6e6a68 219.2px,#6a6461 221.3px)"></div>
<div class="a" style="left:704px;top:0;width:8px;height:509px;background:linear-gradient(#769cd4 -10.6px,#80a6dd 55.4px,#8ab0e4 89.4px,#a0c6f0 123.4px,#b4daf8 148.4px,#c8ecfc 174.7px,#daf8fc 188.0px,#eafcfc 198.0px,#cce0e0 206.5px,#a8b8b4 210.8px,#8c9090 215.0px,#6e6a68 219.3px,#6a6461 221.4px)"></div>
<div class="a" style="left:712px;top:0;width:8px;height:509px;background:linear-gradient(#769cd4 -10.4px,#80a6dd 55.6px,#8ab0e4 89.6px,#a0c6f0 123.6px,#b4daf8 148.6px,#c8ecfc 174.9px,#daf8fc 188.1px,#eafcfc 198.0px,#cce0e0 206.6px,#a8b8b4 210.8px,#8c9090 215.1px,#6e6a68 219.4px,#6a6461 221.6px)"></div>
<div class="a" style="left:720px;top:0;width:8px;height:509px;background:linear-gradient(#769cd4 -10.1px,#80a6dd 55.9px,#8ab0e4 89.9px,#a0c6f0 123.9px,#b4daf8 148.9px,#c8ecfc 175.2px,#daf8fc 188.2px,#eafcfc 198.0px,#cce0e0 206.6px,#a8b8b4 210.9px,#8c9090 215.2px,#6e6a68 219.6px,#6a6461 221.7px)"></div>
<div class="a" style="left:728px;top:0;width:8px;height:509px;background:linear-gradient(#769cd4 -9.8px,#80a6dd 56.2px,#8ab0e4 90.2px,#a0c6f0 124.2px,#b4daf8 149.2px,#c8ecfc 175.4px,#daf8fc 188.3px,#eafcfc 198.0px,#cce0e0 206.7px,#a8b8b4 211.0px,#8c9090 215.4px,#6e6a68 219.7px,#6a6461 221.9px)"></div>
<div class="a" style="left:736px;top:0;width:8px;height:509px;background:linear-gradient(#769cd4 -9.5px,#80a6dd 56.5px,#8ab0e4 90.5px,#a0c6f0 124.5px,#b4daf8 149.5px,#c8ecfc 175.7px,#daf8fc 188.4px,#eafcfc 198.0px,#cce0e0 206.7px,#a8b8b4 211.1px,#8c9090 215.5px,#6e6a68 219.8px,#6a6461 222.0px)"></div>
<div class="a" style="left:744px;top:0;width:8px;height:509px;background:linear-gradient(#769cd4 -9.3px,#80a6dd 56.7px,#8ab0e4 90.7px,#a0c6f0 124.7px,#b4daf8 149.7px,#c8ecfc 175.9px,#daf8fc 188.5px,#eafcfc 198.0px,#cce0e0 206.8px,#a8b8b4 211.2px,#8c9090 215.6px,#6e6a68 220.0px,#6a6461 222.2px)"></div>
<div class="a" style="left:752px;top:0;width:8px;height:509px;background:linear-gradient(#769cd4 -9.0px,#80a6dd 57.0px,#8ab0e4 91.0px,#a0c6f0 125.0px,#b4daf8 150.0px,#c8ecfc 176.1px,#daf8fc 188.6px,#eafcfc 198.0px,#cce0e0 206.9px,#a8b8b4 211.3px,#8c9090 215.7px,#6e6a68 220.2px,#6a6461 222.4px)"></div>
<div class="a" style="left:760px;top:0;width:8px;height:509px;background:linear-gradient(#769cd4 -8.7px,#80a6dd 57.3px,#8ab0e4 91.3px,#a0c6f0 125.3px,#b4daf8 150.3px,#c8ecfc 176.4px,#daf8fc 188.7px,#eafcfc 198.0px,#cce0e0 206.9px,#a8b8b4 211.4px,#8c9090 215.9px,#6e6a68 220.3px,#6a6461 222.6px)"></div>
<div class="a" style="left:768px;top:0;width:8px;height:509px;background:linear-gradient(#769cd4 -8.5px,#80a6dd 57.5px,#8ab0e4 91.5px,#a0c6f0 125.5px,#b4daf8 150.5px,#c8ecfc 176.6px,#daf8fc 188.8px,#eafcfc 198.0px,#cce0e0 207.0px,#a8b8b4 211.5px,#8c9090 216.0px,#6e6a68 220.5px,#6a6461 222.8px)"></div>
<div class="a" style="left:776px;top:0;width:8px;height:509px;background:linear-gradient(#769cd4 -8.2px,#80a6dd 57.8px,#8ab0e4 91.8px,#a0c6f0 125.8px,#b4daf8 150.8px,#c8ecfc 176.8px,#daf8fc 188.9px,#eafcfc 198.0px,#cce0e0 207.1px,#a8b8b4 211.6px,#8c9090 216.2px,#6e6a68 220.7px,#6a6461 223.0px)"></div>
<div class="a" style="left:784px;top:0;width:8px;height:509px;background:linear-gradient(#769cd4 -7.9px,#80a6dd 58.1px,#8ab0e4 92.1px,#a0c6f0 126.1px,#b4daf8 151.1px,#c8ecfc 177.1px,#daf8fc 189.0px,#eafcfc 198.0px,#cce0e0 207.2px,#a8b8b4 211.7px,#8c9090 216.3px,#6e6a68 220.9px,#6a6461 223.2px)"></div>
<div class="a" style="left:792px;top:0;width:8px;height:509px;background:linear-gradient(#769cd4 -7.6px,#80a6dd 58.4px,#8ab0e4 92.4px,#a0c6f0 126.4px,#b4daf8 151.4px,#c8ecfc 177.3px,#daf8fc 189.1px,#eafcfc 198.0px,#cce0e0 207.2px,#a8b8b4 211.9px,#8c9090 216.5px,#6e6a68 221.1px,#6a6461 223.4px)"></div>
<div class="a" style="left:800px;top:0;width:8px;height:509px;background:linear-gradient(#769cd4 -7.4px,#80a6dd 58.6px,#8ab0e4 92.6px,#a0c6f0 126.6px,#b4daf8 151.6px,#c8ecfc 177.6px,#daf8fc 189.2px,#eafcfc 198.0px,#cce0e0 207.3px,#a8b8b4 212.0px,#8c9090 216.6px,#6e6a68 221.3px,#6a6461 223.6px)"></div>
<div class="a" style="left:808px;top:0;width:8px;height:509px;background:linear-gradient(#769cd4 -7.1px,#80a6dd 58.9px,#8ab0e4 92.9px,#a0c6f0 126.9px,#b4daf8 151.9px,#c8ecfc 177.8px,#daf8fc 189.3px,#eafcfc 198.0px,#cce0e0 207.4px,#a8b8b4 212.1px,#8c9090 216.8px,#6e6a68 221.5px,#6a6461 223.9px)"></div>
<div class="a" style="left:816px;top:0;width:8px;height:509px;background:linear-gradient(#769cd4 -6.8px,#80a6dd 59.2px,#8ab0e4 93.2px,#a0c6f0 127.2px,#b4daf8 152.2px,#c8ecfc 178.0px,#daf8fc 189.4px,#eafcfc 198.0px,#cce0e0 207.5px,#a8b8b4 212.2px,#8c9090 217.0px,#6e6a68 221.7px,#6a6461 224.1px)"></div>
<div class="a" style="left:824px;top:0;width:8px;height:509px;background:linear-gradient(#769cd4 -6.5px,#80a6dd 59.5px,#8ab0e4 93.5px,#a0c6f0 127.5px,#b4daf8 152.5px,#c8ecfc 178.3px,#daf8fc 189.5px,#eafcfc 198.0px,#cce0e0 207.6px,#a8b8b4 212.4px,#8c9090 217.2px,#6e6a68 222.0px,#6a6461 224.4px)"></div>
<div class="a" style="left:832px;top:0;width:8px;height:509px;background:linear-gradient(#769cd4 -6.3px,#80a6dd 59.7px,#8ab0e4 93.7px,#a0c6f0 127.7px,#b4daf8 152.7px,#c8ecfc 178.5px,#daf8fc 189.6px,#eafcfc 198.0px,#cce0e0 207.7px,#a8b8b4 212.5px,#8c9090 217.4px,#6e6a68 222.2px,#6a6461 224.6px)"></div>
<div class="a" style="left:840px;top:0;width:8px;height:509px;background:linear-gradient(#769cd4 -6.0px,#80a6dd 60.0px,#8ab0e4 94.0px,#a0c6f0 128.0px,#b4daf8 153.0px,#c8ecfc 178.7px,#daf8fc 189.7px,#eafcfc 198.0px,#cce0e0 207.8px,#a8b8b4 212.7px,#8c9090 217.5px,#6e6a68 222.4px,#6a6461 224.9px)"></div>
<div class="a" style="left:848px;top:0;width:8px;height:509px;background:linear-gradient(#769cd4 -5.7px,#80a6dd 60.3px,#8ab0e4 94.3px,#a0c6f0 128.3px,#b4daf8 153.3px,#c8ecfc 179.0px,#daf8fc 189.9px,#eafcfc 198.0px,#cce0e0 207.9px,#a8b8b4 212.8px,#8c9090 217.7px,#6e6a68 222.7px,#6a6461 225.1px)"></div>
<div class="a" style="left:856px;top:0;width:8px;height:509px;background:linear-gradient(#769cd4 -5.5px,#80a6dd 60.5px,#8ab0e4 94.5px,#a0c6f0 128.5px,#b4daf8 153.5px,#c8ecfc 179.2px,#daf8fc 190.0px,#eafcfc 198.0px,#cce0e0 208.0px,#a8b8b4 213.0px,#8c9090 217.9px,#6e6a68 222.9px,#6a6461 225.4px)"></div>
<div class="a" style="left:864px;top:0;width:8px;height:509px;background:linear-gradient(#769cd4 -5.2px,#80a6dd 60.8px,#8ab0e4 94.8px,#a0c6f0 128.8px,#b4daf8 153.8px,#c8ecfc 179.5px,#daf8fc 190.1px,#eafcfc 198.0px,#cce0e0 208.1px,#a8b8b4 213.1px,#8c9090 218.1px,#6e6a68 223.2px,#6a6461 225.7px)"></div>
<div class="a" style="left:872px;top:0;width:8px;height:509px;background:linear-gradient(#769cd4 -4.9px,#80a6dd 61.1px,#8ab0e4 95.1px,#a0c6f0 129.1px,#b4daf8 154.1px,#c8ecfc 179.7px,#daf8fc 190.2px,#eafcfc 198.0px,#cce0e0 208.2px,#a8b8b4 213.3px,#8c9090 218.4px,#6e6a68 223.4px,#6a6461 226.0px)"></div>
<div class="a" style="left:880px;top:0;width:8px;height:509px;background:linear-gradient(#769cd4 -4.6px,#80a6dd 61.4px,#8ab0e4 95.4px,#a0c6f0 129.4px,#b4daf8 154.4px,#c8ecfc 179.9px,#daf8fc 190.3px,#eafcfc 198.0px,#cce0e0 208.3px,#a8b8b4 213.4px,#8c9090 218.6px,#6e6a68 223.7px,#6a6461 226.3px)"></div>
<div class="a" style="left:888px;top:0;width:8px;height:509px;background:linear-gradient(#769cd4 -4.4px,#80a6dd 61.6px,#8ab0e4 95.6px,#a0c6f0 129.6px,#b4daf8 154.6px,#c8ecfc 180.2px,#daf8fc 190.4px,#eafcfc 198.0px,#cce0e0 208.4px,#a8b8b4 213.6px,#8c9090 218.8px,#6e6a68 224.0px,#6a6461 226.6px)"></div>
<div class="a" style="left:896px;top:0;width:8px;height:509px;background:linear-gradient(#769cd4 -4.1px,#80a6dd 61.9px,#8ab0e4 95.9px,#a0c6f0 129.9px,#b4daf8 154.9px,#c8ecfc 180.4px,#daf8fc 190.5px,#eafcfc 198.0px,#cce0e0 208.5px,#a8b8b4 213.8px,#8c9090 219.0px,#6e6a68 224.3px,#6a6461 226.9px)"></div>
<div class="a" style="left:904px;top:0;width:8px;height:509px;background:linear-gradient(#769cd4 -3.8px,#80a6dd 62.2px,#8ab0e4 96.2px,#a0c6f0 130.2px,#b4daf8 155.2px,#c8ecfc 180.7px,#daf8fc 190.6px,#eafcfc 198.0px,#cce0e0 208.6px,#a8b8b4 213.9px,#8c9090 219.3px,#6e6a68 224.6px,#6a6461 227.2px)"></div>
<div class="a" style="left:912px;top:0;width:8px;height:509px;background:linear-gradient(#769cd4 -3.6px,#80a6dd 62.4px,#8ab0e4 96.4px,#a0c6f0 130.4px,#b4daf8 155.4px,#c8ecfc 180.9px,#daf8fc 190.7px,#eafcfc 198.0px,#cce0e0 208.7px,#a8b8b4 214.1px,#8c9090 219.5px,#6e6a68 224.9px,#6a6461 227.6px)"></div>
<div class="a" style="left:920px;top:0;width:8px;height:509px;background:linear-gradient(#769cd4 -3.3px,#80a6dd 62.7px,#8ab0e4 96.7px,#a0c6f0 130.7px,#b4daf8 155.7px,#c8ecfc 181.1px,#daf8fc 190.8px,#eafcfc 198.0px,#cce0e0 208.9px,#a8b8b4 214.3px,#8c9090 219.7px,#6e6a68 225.2px,#6a6461 227.9px)"></div>
<div class="a" style="left:928px;top:0;width:8px;height:509px;background:linear-gradient(#769cd4 -3.0px,#80a6dd 63.0px,#8ab0e4 97.0px,#a0c6f0 131.0px,#b4daf8 156.0px,#c8ecfc 181.4px,#daf8fc 190.9px,#eafcfc 198.0px,#cce0e0 209.0px,#a8b8b4 214.5px,#8c9090 220.0px,#6e6a68 225.5px,#6a6461 228.2px)"></div>
<div class="a" style="left:936px;top:0;width:8px;height:509px;background:linear-gradient(#769cd4 -2.7px,#80a6dd 63.3px,#8ab0e4 97.3px,#a0c6f0 131.3px,#b4daf8 156.3px,#c8ecfc 181.6px,#daf8fc 191.0px,#eafcfc 198.0px,#cce0e0 209.1px,#a8b8b4 214.7px,#8c9090 220.2px,#6e6a68 225.8px,#6a6461 228.6px)"></div>
<div class="a" style="left:944px;top:0;width:8px;height:509px;background:linear-gradient(#769cd4 -2.5px,#80a6dd 63.5px,#8ab0e4 97.5px,#a0c6f0 131.5px,#b4daf8 156.5px,#c8ecfc 181.8px,#daf8fc 191.1px,#eafcfc 198.0px,#cce0e0 209.2px,#a8b8b4 214.9px,#8c9090 220.5px,#6e6a68 226.1px,#6a6461 228.9px)"></div>
<div class="a" style="left:952px;top:0;width:8px;height:509px;background:linear-gradient(#769cd4 -2.2px,#80a6dd 63.8px,#8ab0e4 97.8px,#a0c6f0 131.8px,#b4daf8 156.8px,#c8ecfc 182.1px,#daf8fc 191.2px,#eafcfc 198.0px,#cce0e0 209.4px,#a8b8b4 215.1px,#8c9090 220.8px,#6e6a68 226.4px,#6a6461 229.3px)"></div>
<div class="a" style="left:960px;top:0;width:8px;height:509px;background:linear-gradient(#769cd4 -1.9px,#80a6dd 64.1px,#8ab0e4 98.1px,#a0c6f0 132.1px,#b4daf8 157.1px,#c8ecfc 182.3px,#daf8fc 191.3px,#eafcfc 198.0px,#cce0e0 209.5px,#a8b8b4 215.3px,#8c9090 221.0px,#6e6a68 226.8px,#6a6461 229.7px)"></div>
<div class="a" style="left:968px;top:0;width:8px;height:509px;background:linear-gradient(#769cd4 -1.7px,#80a6dd 64.3px,#8ab0e4 98.3px,#a0c6f0 132.3px,#b4daf8 157.3px,#c8ecfc 182.6px,#daf8fc 191.4px,#eafcfc 198.0px,#cce0e0 209.6px,#a8b8b4 215.5px,#8c9090 221.3px,#6e6a68 227.1px,#6a6461 230.0px)"></div>
<div class="a" style="left:976px;top:0;width:8px;height:509px;background:linear-gradient(#769cd4 -1.4px,#80a6dd 64.6px,#8ab0e4 98.6px,#a0c6f0 132.6px,#b4daf8 157.6px,#c8ecfc 182.8px,#daf8fc 191.5px,#eafcfc 198.0px,#cce0e0 209.8px,#a8b8b4 215.7px,#8c9090 221.6px,#6e6a68 227.5px,#6a6461 230.4px)"></div>
<div class="a" style="left:984px;top:0;width:8px;height:509px;background:linear-gradient(#769cd4 -1.1px,#80a6dd 64.9px,#8ab0e4 98.9px,#a0c6f0 132.9px,#b4daf8 157.9px,#c8ecfc 183.0px,#daf8fc 191.6px,#eafcfc 198.0px,#cce0e0 209.9px,#a8b8b4 215.9px,#8c9090 221.9px,#6e6a68 227.8px,#6a6461 230.8px)"></div>
<div class="a" style="left:992px;top:0;width:8px;height:509px;background:linear-gradient(#769cd4 -0.8px,#80a6dd 65.2px,#8ab0e4 99.2px,#a0c6f0 133.2px,#b4daf8 158.2px,#c8ecfc 183.3px,#daf8fc 191.7px,#eafcfc 198.0px,#cce0e0 210.1px,#a8b8b4 216.1px,#8c9090 222.2px,#6e6a68 228.2px,#6a6461 231.2px)"></div>
<div class="a" style="left:1000px;top:0;width:8px;height:509px;background:linear-gradient(#769cd4 -0.6px,#80a6dd 65.4px,#8ab0e4 99.4px,#a0c6f0 133.4px,#b4daf8 158.4px,#c8ecfc 183.5px,#daf8fc 191.8px,#eafcfc 198.0px,#cce0e0 210.2px,#a8b8b4 216.3px,#8c9090 222.4px,#6e6a68 228.6px,#6a6461 231.6px)"></div>
<div class="a" style="left:1008px;top:0;width:8px;height:509px;background:linear-gradient(#769cd4 -0.3px,#80a6dd 65.7px,#8ab0e4 99.7px,#a0c6f0 133.7px,#b4daf8 158.7px,#c8ecfc 183.7px,#daf8fc 191.9px,#eafcfc 198.0px,#cce0e0 210.4px,#a8b8b4 216.6px,#8c9090 222.7px,#6e6a68 228.9px,#6a6461 232.0px)"></div>
<div class="a" style="left:1016px;top:0;width:8px;height:509px;background:linear-gradient(#769cd4 -0.0px,#80a6dd 66.0px,#8ab0e4 100.0px,#a0c6f0 134.0px,#b4daf8 159.0px,#c8ecfc 184.0px,#daf8fc 192.0px,#eafcfc 198.0px,#cce0e0 210.5px,#a8b8b4 216.8px,#8c9090 223.1px,#6e6a68 229.3px,#6a6461 232.5px)"></div>
<div class="a" style="left:1024px;top:0;width:8px;height:509px;background:linear-gradient(#769cd4 0.3px,#80a6dd 66.3px,#8ab0e4 100.3px,#a0c6f0 134.3px,#b4daf8 159.3px,#c8ecfc 184.2px,#daf8fc 192.1px,#eafcfc 198.0px,#cce0e0 210.7px,#a8b8b4 217.0px,#8c9090 223.4px,#6e6a68 229.7px,#6a6461 232.9px)"></div>
<div class="a" style="left:1032px;top:0;width:8px;height:509px;background:linear-gradient(#769cd4 0.5px,#80a6dd 66.5px,#8ab0e4 100.5px,#a0c6f0 134.5px,#b4daf8 159.5px,#c8ecfc 184.5px,#daf8fc 192.2px,#eafcfc 198.0px,#cce0e0 210.8px,#a8b8b4 217.3px,#8c9090 223.7px,#6e6a68 230.1px,#6a6461 233.3px)"></div>
<div class="a" style="left:1040px;top:0;width:8px;height:509px;background:linear-gradient(#769cd4 0.8px,#80a6dd 66.8px,#8ab0e4 100.8px,#a0c6f0 134.8px,#b4daf8 159.8px,#c8ecfc 184.7px,#daf8fc 192.3px,#eafcfc 198.0px,#cce0e0 211.0px,#a8b8b4 217.5px,#8c9090 224.0px,#6e6a68 230.5px,#6a6461 233.8px)"></div>
<div class="a" style="left:1048px;top:0;width:8px;height:509px;background:linear-gradient(#769cd4 1.1px,#80a6dd 67.1px,#8ab0e4 101.1px,#a0c6f0 135.1px,#b4daf8 160.1px,#c8ecfc 184.9px,#daf8fc 192.4px,#eafcfc 198.0px,#cce0e0 211.2px,#a8b8b4 217.7px,#8c9090 224.3px,#6e6a68 230.9px,#6a6461 234.2px)"></div>
<div class="a" style="left:1056px;top:0;width:8px;height:509px;background:linear-gradient(#769cd4 1.3px,#80a6dd 67.3px,#8ab0e4 101.3px,#a0c6f0 135.3px,#b4daf8 160.3px,#c8ecfc 185.2px,#daf8fc 192.5px,#eafcfc 198.0px,#cce0e0 211.3px,#a8b8b4 218.0px,#8c9090 224.7px,#6e6a68 231.3px,#6a6461 234.7px)"></div>
<div class="a" style="left:1064px;top:0;width:8px;height:509px;background:linear-gradient(#769cd4 1.6px,#80a6dd 67.6px,#8ab0e4 101.6px,#a0c6f0 135.6px,#b4daf8 160.6px,#c8ecfc 185.4px,#daf8fc 192.6px,#eafcfc 198.0px,#cce0e0 211.5px,#a8b8b4 218.2px,#8c9090 225.0px,#6e6a68 231.7px,#6a6461 235.1px)"></div>
<div class="a" style="left:1072px;top:0;width:8px;height:509px;background:linear-gradient(#769cd4 1.9px,#80a6dd 67.9px,#8ab0e4 101.9px,#a0c6f0 135.9px,#b4daf8 160.9px,#c8ecfc 185.6px,#daf8fc 192.7px,#eafcfc 198.0px,#cce0e0 211.7px,#a8b8b4 218.5px,#8c9090 225.3px,#6e6a68 232.2px,#6a6461 235.6px)"></div>
<div class="a" style="left:1080px;top:0;width:8px;height:509px;background:linear-gradient(#769cd4 2.2px,#80a6dd 68.2px,#8ab0e4 102.2px,#a0c6f0 136.2px,#b4daf8 161.2px,#c8ecfc 185.9px,#daf8fc 192.8px,#eafcfc 198.0px,#cce0e0 211.8px,#a8b8b4 218.8px,#8c9090 225.7px,#6e6a68 232.6px,#6a6461 236.1px)"></div>
<div class="a" style="left:1088px;top:0;width:8px;height:509px;background:linear-gradient(#769cd4 2.4px,#80a6dd 68.4px,#8ab0e4 102.4px,#a0c6f0 136.4px,#b4daf8 161.4px,#c8ecfc 186.1px,#daf8fc 192.9px,#eafcfc 198.0px,#cce0e0 212.0px,#a8b8b4 219.0px,#8c9090 226.0px,#6e6a68 233.1px,#6a6461 236.6px)"></div>
<div class="a" style="left:1096px;top:0;width:5px;height:509px;background:linear-gradient(#769cd4 2.7px,#80a6dd 68.7px,#8ab0e4 102.7px,#a0c6f0 136.7px,#b4daf8 161.7px,#c8ecfc 186.4px,#daf8fc 193.0px,#eafcfc 198.0px,#cce0e0 212.2px,#a8b8b4 219.3px,#8c9090 226.4px,#6e6a68 233.5px,#6a6461 237.1px)"></div>
<div class="a" style="left:0;top:0;width:1101px;height:260px;background:linear-gradient(90deg,rgba(255,255,255,0.08) 0%,rgba(255,255,255,0.03) 30%,rgba(0,0,0,0) 50%,rgba(40,50,70,0.12) 100%);-webkit-mask-image:linear-gradient(to bottom,#000 0%,rgba(0,0,0,0.8) 50%,transparent 100%)"></div>
<svg style="left:0;top:-1px" width="1101" height="510"><g stroke="#7c7878" stroke-width="1" fill="none" opacity="0.42">
<path d="M0 261.5 H1101 M0 329.5 H1101 M0 366.5 H1101 M0 391.5 H1101 M0 429.5 H1101 M0 482.5 H1101"/>
<path d="M6 335 L262 270 L440 241 M782 268 L1101 361"/>
<path d="M6.5 335 V510 M34.5 352 V510"/>
</g></svg>

</div>

<!-- tool palette -->
<div class="a" style="left:363px;top:78px;width:43px;height:146px;background:#1f242b;border-radius:4px"></div>
<svg style="left:0;top:0" width="1" height="1"><path d="M377 84.5 H393 M377 87.5 H393" stroke="#8a8e92" stroke-width="1"/></svg>
<div class="a" style="left:366px;top:95px;width:37px;height:20px;background:#575757;border-radius:2px 2px 0 0"></div>
<div class="a" style="left:366px;top:116px;width:37px;height:20px;background:#46607e"></div>
<div class="a" style="left:366px;top:137px;width:37px;height:20px;background:#575757"></div>
<div class="a" style="left:366px;top:158px;width:37px;height:20px;background:#575757"></div>
<div class="a" style="left:366px;top:179px;width:37px;height:20px;background:#575757"></div>
<div class="a" style="left:366px;top:200px;width:37px;height:20px;background:#575757;border-radius:0 0 2px 2px"></div>
<svg style="left:0;top:0" width="1" height="1">
<g stroke="#d4d4d4" stroke-width="1.9" stroke-linecap="round" fill="none"><path d="M381.4 104 V99.6 M384 104 V98 M386.6 104 V98.8 M389.1 105 V101.2 M378.3 103.4 L381.2 107.6"/></g><path d="M380.4 103.5 H390.05 V107 C390.05 110 388.3 112.2 385.8 112.2 H383.4 C381.8 112.2 380.8 110.6 380.2 108.4Z" fill="#d4d4d4"/>
<g stroke="#d4d8dc" stroke-width="1.3" fill="none"><path d="M384.5 120 V132 M378.5 126 H390.5"/><path d="M382.5 122 L384.5 120 L386.5 122 M382.5 130 L384.5 132 L386.5 130 M380.5 124 L378.5 126 L380.5 128 M388.5 124 L390.5 126 L388.5 128"/></g>
<g stroke="#c8c8c8" stroke-width="1.1" fill="none"><path d="M382.5 141.5 A5.5 5.5 0 0 0 382 152.3 M386.5 152.5 A5.5 5.5 0 0 0 387 141.7"/><path d="M386.5 140 L386.8 142 L389 141.6 M382.5 154 L382.2 152 L380 152.4"/></g>
<g stroke="#c8c8c8" stroke-width="1.1" fill="none"><rect x="378.5" y="161.5" width="13" height="13"/><rect x="378.5" y="170.5" width="4" height="4"/><path d="M383 170 L389 164 M385.5 163.8 H389.2 V167.5"/></g>
<g fill="#c8c8c8"><rect x="378" y="182" width="3" height="3"/><rect x="389" y="182" width="3" height="3"/><rect x="378" y="193" width="3" height="3"/><rect x="389" y="193" width="3" height="3"/></g><path d="M382 183.5 H388 M382 194.5 H388 M379.5 186 V192 M390.5 186 V192" stroke="#c8c8c8" stroke-width="1"/>
<g stroke="#c8c8c8" stroke-width="1.1" fill="none"><circle cx="385" cy="210" r="5.8"/><path d="M385 205 V215 M380 210 H390"/></g><path d="M390 203 L393 203 L393 206Z M380 217 L377 217 L377 214Z" fill="#c8c8c8"/>
</svg>

<!-- gizmo -->
<svg style="left:0;top:0" width="1" height="1">
<path d="M1360 84.5 H1374 M1360 87.5 H1374" stroke="#4a4d52" stroke-width="1"/>
<path d="M1441 93 V91.5 A1.5 1.5 0 0 0 1438 91.5" stroke="#9aa0a0" fill="none" stroke-width="0.8"/><rect x="1436.2" y="94.5" width="6" height="6.5" fill="#a8aca8"/>
<path d="M1400.5 99.5 L1413.5 99.5 L1407 118.5Z" fill="#8faa80" stroke="#4a4440" stroke-width="1"/>
<text x="1403.5" y="96" font-size="9" fill="#e8e8e8" font-family="Liberation Sans">y</text>
<path d="M1380 122.3 L1398.8 127.8 L1380 133.3 A2.2 5.5 0 0 1 1380 122.3Z" fill="#4a3e3a"/>
<path d="M1370 125.5 L1374 129.5 M1374 125.5 L1370 129.5" stroke="#d8d8d8" stroke-width="0.9"/>
<defs><linearGradient id="cg" x1="0" y1="0" x2="0" y2="1"><stop offset="0" stop-color="#f4f6f4"/><stop offset="1" stop-color="#a8aca4"/></linearGradient>
<linearGradient id="cg2" x1="0" y1="0" x2="1" y2="0"><stop offset="0" stop-color="#f0f4f0"/><stop offset="1" stop-color="#b0b4ac"/></linearGradient></defs>
<path d="M1434.2 122.3 L1416.3 127.8 L1434.2 133.3 A2.2 5.5 0 0 0 1434.2 122.3Z" fill="url(#cg)"/>
<path d="M1401.2 153.6 L1407 136.5 L1412.8 153.6 A5.8 2 0 0 1 1401.2 153.6Z" fill="url(#cg2)"/>
<rect x="1400.5" y="121.5" width="13" height="14" fill="#e8ecec" stroke="#8a9aa8" stroke-width="0.6"/>
<path d="M1391.2 174.3 L1382.5 178.3 L1391.2 182.3 M1382.5 178.3 H1392.5" stroke="#dce6f0" stroke-width="1.1" fill="none"/>
</svg>
<div class="t" style="left:1395px;top:171px;color:#cfc8bc;font-size:12.3px">Persp</div>


<!-- INSPECTOR -->
<div class="a" style="left:1464px;top:31px;width:446px;height:913px;background:#383838"></div>
<div class="a" style="left:1464px;top:31px;width:446px;height:19px;background:#232323"></div>
<div class="a" style="left:1464px;top:31px;width:93px;height:19px;background:#3a3a3a;border-radius:0 3px 0 0"></div>
<svg style="left:0;top:0" width="1" height="1"><circle cx="1478.5" cy="41.2" r="5.2" fill="#c4c4c4"/><rect x="1477.6" y="40" width="1.9" height="4.5" fill="#232323"/><rect x="1477.6" y="37.5" width="1.9" height="1.6" fill="#232323"/>
<g transform="translate(0 0)"><path d="M1883.4 36.8 Q1884.6 35.2 1886.2 35.2 Q1888.9 35.3 1888.9 37.8 V40.6" class="ic" style="stroke-width:1.1"/><rect x="1882.7" y="40.7" width="6.8" height="4" class="ic" style="stroke-width:1.1"/></g>
<g fill="#c4c4c4"><rect x="1901" y="35" width="2" height="2"/><rect x="1901" y="39" width="2" height="2"/><rect x="1901" y="43" width="2" height="2"/></g></svg>
<div class="t" style="left:1488px;top:34px;font-size:12.6px">Inspector</div>

<!-- PROJECT -->
<div class="a" style="left:0;top:587px;width:1462px;height:357px;background:#383838"></div>
<div class="a" style="left:0;top:587px;width:1462px;height:19px;background:#232323"></div>
<div class="a" style="left:0;top:587px;width:77px;height:19px;background:#3a3a3a;border-radius:0 3px 0 0"></div>
<svg style="left:0;top:0" width="1" height="1">
<path d="M4 592.3 H9.5 L11 594 H16 V602 H4Z" fill="#c4c4c4"/>
<rect x="87" y="591" width="10" height="11" rx="1" fill="#c4c4c4"/><path d="M88.5 593.8 H95.5 M88.5 596.3 H93.5 M88.5 598.8 H95.5" stroke="#232323" stroke-width="1.1"/>
<g transform="translate(-454 556)"><path d="M1883.4 36.8 Q1884.6 35.2 1886.2 35.2 Q1888.9 35.3 1888.9 37.8 V40.6" class="ic" style="stroke-width:1.1"/><rect x="1882.7" y="40.7" width="6.8" height="4" class="ic" style="stroke-width:1.1"/></g>
<g fill="#c4c4c4"><rect x="1447" y="591" width="2" height="2"/><rect x="1447" y="595" width="2" height="2"/><rect x="1447" y="599" width="2" height="2"/></g>
</svg>
<div class="t" style="left:20px;top:590px;font-size:12.6px">Project</div>
<div class="t" style="left:102px;top:590px;font-size:12.6px">Console</div>
<div class="a" style="left:0;top:606px;width:1462px;height:20px;background:#3c3c3c"></div>
<svg style="left:0;top:0" width="1" height="1"><path d="M10 610.3 V622 M4 616.2 H16" stroke="#c4c4c4" stroke-width="2"/><path d="M19.5 614 L27.8 614 L23.7 618.5Z" fill="#c4c4c4"/></svg>
<div class="a" style="left:1024px;top:608px;width:318px;height:16px;background:#2a2a2a;border:1px solid #1e1e1e;border-radius:3px"></div>
<svg style="left:0;top:0" width="1" height="1">
<circle cx="1031.6" cy="615.3" r="2.3" class="ic" style="stroke-width:1.2"/><path d="M1033.3 617 L1035.8 619.6" stroke="#c4c4c4" stroke-width="1.4"/>
<rect x="1328.5" y="610.5" width="9" height="9" class="ic"/><rect x="1326.5" y="617.5" width="4" height="4" class="ic" style="fill:#2a2a2a"/><path d="M1330 618 L1335.5 612.5 M1332.5 612.5 H1335.5 V615.5" class="ic"/>
<g fill="#262626"><rect x="1344" y="606" width="1" height="20"/><rect x="1370" y="606" width="1" height="20"/><rect x="1396" y="606" width="1" height="20"/><rect x="1422" y="606" width="1" height="20"/></g>
<rect x="1352" y="609" width="6" height="5.5" fill="#c8c8c8"/><path d="M1360.3 611.5 L1363 617.5 H1357.6Z" fill="#c8c8c8"/><circle cx="1354.6" cy="618.3" r="3.7" fill="#c8c8c8" stroke="#3c3c3c" stroke-width="0.9"/>
<path d="M1377 616.5 L1382.5 611 H1387.3 V615.8 L1381.8 621.3Z" fill="#c8c8c8"/><circle cx="1384.8" cy="613.4" r="0.9" fill="#3c3c3c"/>
<path d="M1409 610 L1410.6 613.6 L1414.6 614 L1411.6 616.6 L1412.5 620.6 L1409 618.5 L1405.5 620.6 L1406.4 616.6 L1403.4 614 L1407.4 613.6Z" fill="#7e807e"/>
<path d="M1428.5 616 C1431 612 1438 611.5 1441.5 615 C1438 619 1431 619.5 1428.5 616Z" class="ic" style="stroke-width:1.1"/><path d="M1429 621 L1440 610" class="ic" style="stroke-width:1.2"/>
</svg>
<div class="t" style="left:1443px;top:608px;font-size:12.4px">18</div>
<div class="a" style="left:0;top:626px;width:1462px;height:1px;background:#242424"></div>
<div class="a" style="left:262px;top:626px;width:1px;height:318px;background:#1e1e1e"></div>
<div class="a" style="left:263px;top:627px;width:1199px;height:20px;background:#3e3e3e"></div>
<div class="a" style="left:263px;top:647px;width:1199px;height:1px;background:#2e2e2e"></div>
<div class="a" style="left:263px;top:648px;width:1199px;height:296px;background:#333333"></div>
<div class="t" style="left:267px;top:629px;font-size:12.6px">Packages</div>
<div class="t" style="left:341px;top:629px;font-size:12.5px">echo3D Unity SDK</div>
<div class="t" style="left:465px;top:629px;font-size:12px;font-weight:bold;color:#d0d0d0">Runtime</div>
<svg style="left:0;top:0" width="1" height="1"><path d="M330.5 632.5 L334.5 637 L330.5 641.5 M453.5 632.5 L457.5 637 L453.5 641.5" stroke="#8e8e8e" stroke-width="1.2" fill="none"/></svg>
<!-- scrollbar -->
<div class="a" style="left:251px;top:643px;width:10px;height:217px;background:#5f5f5f;border-radius:5px"></div>
<svg style="left:0;top:0" width="1" height="1"><path d="M252.5 637.5 L260 637.5 L256.2 633Z" fill="#c4c4c4"/></svg>
<div class="a" style="left:0;top:866px;width:249px;height:16px;background:#4d4d4d"></div>

<div class="t" style="left:32px;top:627px;font-weight:bold;color:#d0d0d0;font-size:12.2px">Favorites</div>
<div class="t" style="left:45px;top:643px;font-size:12.7px">All Materials</div>
<div class="t" style="left:45px;top:659px;font-size:12.7px">All Models</div>
<div class="t" style="left:45px;top:675px;font-size:12.7px">All Prefabs</div>
<div class="t" style="left:32px;top:706px;font-weight:bold;color:#d0d0d0;font-size:12.2px">Assets</div>
<div class="t" style="left:45px;top:722px;font-size:12.7px">Samples</div>
<div class="t" style="left:45px;top:738px;font-size:12.7px">Scenes</div>
<div class="t" style="left:32px;top:754px;font-weight:bold;color:#d0d0d0;font-size:12.2px">Packages</div>
<div class="t" style="left:45px;top:770px;font-size:12.7px">Burst</div>
<div class="t" style="left:45px;top:786px;font-size:12.7px">Code Coverage</div>
<div class="t" style="left:45px;top:802px;font-size:12.7px">Custom NUnit</div>
<div class="t" style="left:45px;top:818px;font-size:12.7px">echo3D Unity SDK</div>
<div class="t" style="left:59px;top:834px;font-size:12.7px">Editor</div>
<div class="t" style="left:59px;top:850px;font-size:12.7px">Prefabs</div>
<div class="t" style="left:59px;top:866px;font-size:12.7px">Runtime</div>
<div class="t" style="left:45px;top:882px;font-size:12.7px">Editor Coroutines</div>
<div class="t" style="left:45px;top:898px;font-size:12.7px">JetBrains Rider Editor</div>
<div class="t" style="left:45px;top:914px;font-size:12.7px">Mathematics</div>
<div class="t" style="left:45px;top:930px;font-size:12.7px">Newtonsoft Json</div>
<svg style="left:0;top:0" width="1" height="1">
<path d="M1.3 632 L10.3 632 L5.8 640Z" fill="#6e6a6a"/>
<path d="M21 629.5 L22.7 633.3 L26.8 633.6 L23.7 636.3 L24.6 640.3 L21 638.2 L17.4 640.3 L18.3 636.3 L15.2 633.6 L19.3 633.3Z" fill="#c8c8c8"/>
<circle cx="33.5" cy="650.5" r="4" stroke="#c4c4c4" stroke-width="1.1" fill="none"/><path d="M36.5 653.5 L40 657" stroke="#c4c4c4" stroke-width="2"/>
<circle cx="33.5" cy="666.5" r="4" stroke="#c4c4c4" stroke-width="1.1" fill="none"/><path d="M36.5 669.5 L40 673" stroke="#c4c4c4" stroke-width="2"/>
<circle cx="33.5" cy="682.5" r="4" stroke="#c4c4c4" stroke-width="1.1" fill="none"/><path d="M36.5 685.5 L40 689" stroke="#c4c4c4" stroke-width="2"/>
<path d="M1.3 711 L10.3 711 L5.8 719Z" fill="#6e6a6a"/>
<path d="M15.5 719.5 V709.5 H19.5 L21 711.3 H26.5 V713" stroke="#c2c3c2" stroke-width="1" fill="none"/><path d="M16 719.5 L17.8 713.5 H28.6 L27 719.5Z" fill="#c2c3c2"/>
<path d="M16 725 L24 729.5 L16 734Z" fill="#6e6a6a"/>
<path d="M29 725.5 H33.5 L35 727 H41 V735 H29Z" fill="#c2c3c2"/>
<path d="M29 741.5 H33.5 L35 743 H41 V751 H29Z" fill="#c2c3c2"/>
<path d="M1.3 759 L10.3 759 L5.8 767Z" fill="#6e6a6a"/>
<path d="M15.5 767.5 V757.5 H19.5 L21 759.3 H26.5 V761" stroke="#c2c3c2" stroke-width="1" fill="none"/><path d="M16 767.5 L17.8 761.5 H28.6 L27 767.5Z" fill="#c2c3c2"/>
<path d="M16 773 L24 777.5 L16 782Z" fill="#6e6a6a"/>
<path d="M29 773.5 H33.5 L35 775 H41 V783 H29Z" fill="#c2c3c2"/>
<path d="M16 789 L24 793.5 L16 798Z" fill="#6e6a6a"/>
<path d="M29 789.5 H33.5 L35 791 H41 V799 H29Z" fill="#c2c3c2"/>
<path d="M16 805 L24 809.5 L16 814Z" fill="#6e6a6a"/>
<path d="M29 805.5 H33.5 L35 807 H41 V815 H29Z" fill="#c2c3c2"/>
<path d="M15.5 823 L24.5 823 L20.0 831Z" fill="#6e6a6a"/>
<path d="M29.0 831.5 V821.5 H33.0 L34.5 823.3 H40.0 V825" stroke="#c2c3c2" stroke-width="1" fill="none"/><path d="M29.5 831.5 L31.3 825.5 H42.1 L40.5 831.5Z" fill="#c2c3c2"/>
<path d="M43 837.5 H47.5 L49 839 H55 V847 H43Z" fill="#c2c3c2"/>
<path d="M43 853.5 H47.5 L49 855 H55 V863 H43Z" fill="#c2c3c2"/>
<path d="M30 869 L38 873.5 L30 878Z" fill="#6e6a6a"/>
<path d="M43 869.5 H47.5 L49 871 H55 V879 H43Z" fill="#c2c3c2"/>
<path d="M16 885 L24 889.5 L16 894Z" fill="#6e6a6a"/>
<path d="M29 885.5 H33.5 L35 887 H41 V895 H29Z" fill="#c2c3c2"/>
<path d="M16 901 L24 905.5 L16 910Z" fill="#6e6a6a"/>
<path d="M29 901.5 H33.5 L35 903 H41 V911 H29Z" fill="#c2c3c2"/>
<path d="M16 917 L24 921.5 L16 926Z" fill="#6e6a6a"/>
<path d="M29 917.5 H33.5 L35 919 H41 V927 H29Z" fill="#c2c3c2"/>
<path d="M16 933 L24 937.5 L16 942Z" fill="#6e6a6a"/>
<path d="M29 933.5 H33.5 L35 935 H41 V943 H29Z" fill="#c2c3c2"/>
</svg>
<div class="t" style="left:264.4px;top:754px;width:120px;text-align:center;font-size:10.5px;color:#c4c4c4">Core</div>
<div class="t" style="left:372.4px;top:754px;width:120px;text-align:center;font-size:10.5px;color:#c4c4c4">Libraries</div>
<div class="t" style="left:480.4px;top:754px;width:120px;text-align:center;font-size:10.5px;color:#c4c4c4">CustomBehaviour</div>
<div class="t" style="left:588.4px;top:754px;width:120px;text-align:center;font-size:10.5px;color:#c4c4c4">echo3d.echounit...</div>
<div class="t" style="left:696.4px;top:754px;width:120px;text-align:center;font-size:10.5px;color:#c4c4c4">Echo3DHologram</div>
<div class="t" style="left:804.4px;top:754px;width:120px;text-align:center;font-size:10.5px;color:#c4c4c4">Echo3DUtils</div>
<div class="t" style="left:912.4px;top:754px;width:120px;text-align:center;font-size:10.5px;color:#c4c4c4">EchoARStream</div>
<div class="t" style="left:1020.4px;top:754px;width:120px;text-align:center;font-size:10.5px;color:#c4c4c4">RemoteTransfor...</div>
<svg style="left:0;top:0" width="1" height="1">
<path d="M305.7 685.7 H322.7 L327.3 694 H346.0 A4 4 0 0 1 350.0 698 V722 A4 4 0 0 1 346.0 726 H305.7 A4 4 0 0 1 301.7 722 V689.7 A4 4 0 0 1 305.7 685.7Z" fill="#c2c3c2"/>
<path d="M413.7 685.7 H430.7 L435.3 694 H454.0 A4 4 0 0 1 458.0 698 V722 A4 4 0 0 1 454.0 726 H413.7 A4 4 0 0 1 409.7 722 V689.7 A4 4 0 0 1 413.7 685.7Z" fill="#c2c3c2"/>
<path d="M521.9 678 H553.9 L565.9 690 V730 A4 4 0 0 1 561.9 734 H521.9 A4 4 0 0 1 517.9 730 V682 A4 4 0 0 1 521.9 678Z" fill="#ececec"/>
<path d="M537.9 690 L531.9 724 M550.9 690 L544.9 724" stroke="#236b24" stroke-width="5.2"/><path d="M528.9 700.3 H554.9 M526.9 711.5 H552.9" stroke="#236b24" stroke-width="4.8"/>
<path d="M629.9 678 H661.9 L673.9 690 V730 A4 4 0 0 1 669.9 734 H629.9 A4 4 0 0 1 625.9 730 V682 A4 4 0 0 1 629.9 678Z" fill="#ececec"/>
<circle cx="649.9" cy="696" r="4" fill="#5b87b8"/><rect x="648.4" y="697" width="3" height="6" fill="#5b87b8"/><rect x="637.9" y="701.8" width="24" height="24.2" rx="3" fill="#5b87b8"/><circle cx="643.4" cy="713.7" r="3.8" fill="#ececec"/><rect x="635.9" y="711.2" width="7" height="5" fill="#ececec"/>
<path d="M737.9 678 H769.9 L781.9 690 V730 A4 4 0 0 1 777.9 734 H737.9 A4 4 0 0 1 733.9 730 V682 A4 4 0 0 1 737.9 678Z" fill="#ececec"/>
<path d="M753.9 690 L747.9 724 M766.9 690 L760.9 724" stroke="#236b24" stroke-width="5.2"/><path d="M744.9 700.3 H770.9 M742.9 711.5 H768.9" stroke="#236b24" stroke-width="4.8"/>
<path d="M845.9 678 H877.9 L889.9 690 V730 A4 4 0 0 1 885.9 734 H845.9 A4 4 0 0 1 841.9 730 V682 A4 4 0 0 1 845.9 678Z" fill="#ececec"/>
<path d="M861.9 690 L855.9 724 M874.9 690 L868.9 724" stroke="#236b24" stroke-width="5.2"/><path d="M852.9 700.3 H878.9 M850.9 711.5 H876.9" stroke="#236b24" stroke-width="4.8"/>
<path d="M953.9 678 H985.9 L997.9 690 V730 A4 4 0 0 1 993.9 734 H953.9 A4 4 0 0 1 949.9 730 V682 A4 4 0 0 1 953.9 678Z" fill="#ececec"/>
<path d="M969.9 690 L963.9 724 M982.9 690 L976.9 724" stroke="#236b24" stroke-width="5.2"/><path d="M960.9 700.3 H986.9 M958.9 711.5 H984.9" stroke="#236b24" stroke-width="4.8"/>
<path d="M1061.9 678 H1093.9 L1105.9 690 V730 A4 4 0 0 1 1101.9 734 H1061.9 A4 4 0 0 1 1057.9 730 V682 A4 4 0 0 1 1061.9 678Z" fill="#ececec"/>
<path d="M1077.9 690 L1071.9 724 M1090.9 690 L1084.9 724" stroke="#236b24" stroke-width="5.2"/><path d="M1068.9 700.3 H1094.9 M1066.9 711.5 H1092.9" stroke="#236b24" stroke-width="4.8"/>
</svg>
<svg style="left:0;top:0" width="1" height="1"><path d="M860.2 34.2 V47.6 L863.4 44.6 L865.8 50.2 L867.9 49.3 L865.6 44.2 L870.2 44.2Z" fill="#f8fcfc" stroke="#000" stroke-width="1.1" stroke-linejoin="miter"/></svg>

</body></html>
